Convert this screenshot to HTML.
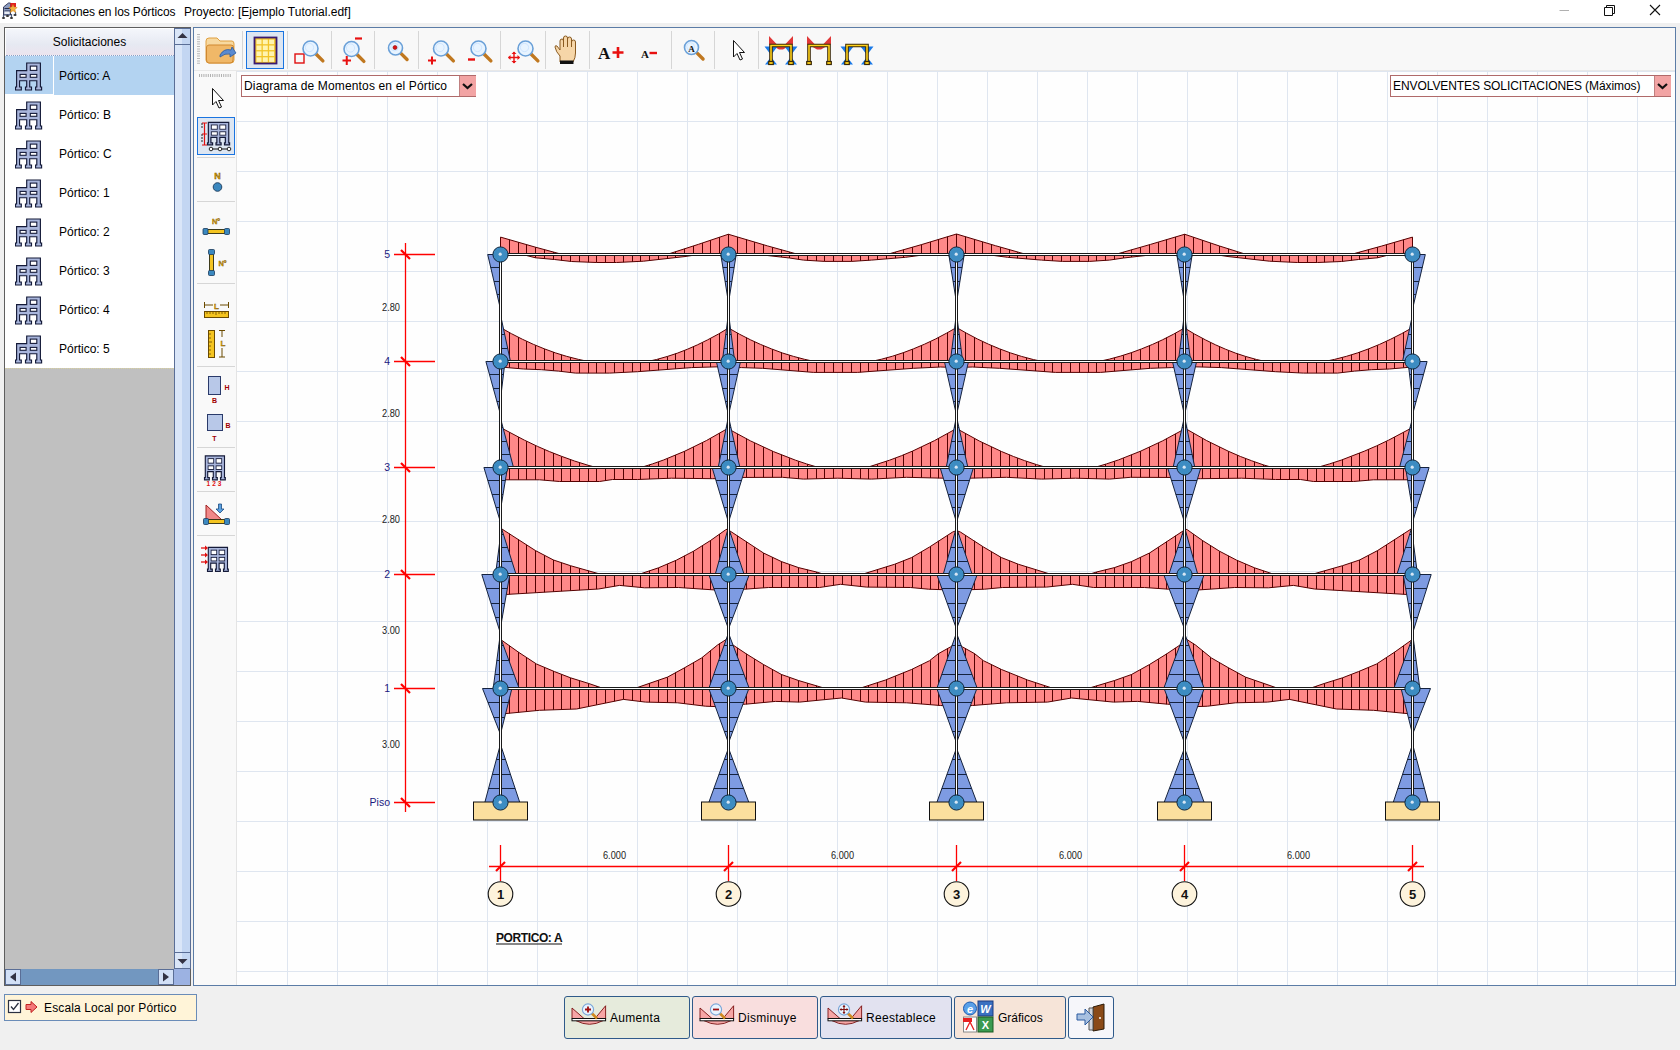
<!DOCTYPE html><html><head><meta charset="utf-8"><style>html,body{margin:0;padding:0;}body{width:1680px;height:1050px;overflow:hidden;position:relative;background:#f0f0f0;font-family:"Liberation Sans", sans-serif;font-size:12px;color:#000;}.a{position:absolute;}svg text{font-family:"Liberation Sans", sans-serif;}</style></head><body>
<div class="a" style="left:0;top:0;width:1680px;height:23px;background:#fff"></div>
<svg class="a" style="left:0;top:0" width="20" height="22"><path d="M3.5 7L8.5 3H10.5V15H3.5Z" fill="#8c9cc0" stroke="#2a3050" stroke-width="0.9"/><path d="M4.5 8.5H10M4.5 11H10" stroke="#1a2040" stroke-width="0.9"/><rect x="4.5" y="11.5" width="5" height="2.5" fill="#e8ecf4"/><path d="M3.5 15V18M7.5 14V16M11.5 14V18M15.5 12V15" stroke="#4a5a80" stroke-width="1.2"/><ellipse cx="3.5" cy="18" rx="1.6" ry="1" fill="#333"/><ellipse cx="7.5" cy="16" rx="1.6" ry="1" fill="#333"/><ellipse cx="11.5" cy="18" rx="1.6" ry="1" fill="#333"/><ellipse cx="15" cy="15" rx="1.6" ry="1" fill="#333"/><rect x="10.3" y="3" width="5.7" height="4" fill="#e02020"/><path d="M13 4.5L14.2 7.3L17.2 7.5L14.9 9.5L15.7 12.4L13 10.8L10.3 12.4L11.1 9.5L8.8 7.5L11.8 7.3Z" fill="#f4b040" stroke="#d08010" stroke-width="0.5"/></svg>
<div class="a" style="left:23px;top:5px;font-size:12px;white-space:pre;color:#000;letter-spacing:-0.1px">Solicitaciones en los Pórticos</div>
<div class="a" style="left:184px;top:5px;font-size:12px;white-space:pre;color:#000">Proyecto: [Ejemplo Tutorial.edf]</div>
<svg class="a" style="left:1550px;top:0" width="130" height="23"><path d="M9.5 10.5H19" stroke="#b0b0b0" stroke-width="1"/><path d="M54.5 7.5H62.5V15.5H54.5Z M56.5 7.5V5.5H64.5V13.5H62.5" fill="none" stroke="#111" stroke-width="1"/><path d="M100 5L110 15M110 5L100 15" stroke="#111" stroke-width="1.1"/></svg>
<div class="a" style="left:4px;top:27px;width:185px;height:957px;border:1px solid #5e5e5e;background:#c0c0c0"></div>
<div class="a" style="left:5px;top:28px;width:169px;height:340px;background:#fff"></div>
<div class="a" style="left:6px;top:29px;width:168px;height:26px;background:linear-gradient(#f4f6fb,#e6e9f2 60%,#ebe4ee);border-bottom:1px dotted #8aa0c8"></div>
<div class="a" style="left:5px;top:35px;width:169px;text-align:center;font-size:12px">Solicitaciones</div>
<div class="a" style="left:5px;top:56px;width:48px;height:38px;background:#b3d3f1"></div>
<div class="a" style="left:54px;top:56px;width:120px;height:39px;background:#b3d3f1"></div>
<svg style="position:absolute;left:15px;top:62px" width="28" height="29" viewBox="-0.5 -0.5 28 29"><path d="M1.1 8.1H11.2V0.5H24.9V24.5H26.1V27.5H20.1V24.5H21.3V18.2H14.2V24.5H16V27.5H10V24.5H11.2V18.2H4.05V24.5H5.8V27.5H0V24.5H1.1Z" fill="#a9b6dc" stroke="#141a38" stroke-width="1.15"/><rect x="14.8" y="3.6" width="6.5" height="4.3" fill="#fff" stroke="#141a38" stroke-width="1.1"/><rect x="4.6" y="11.9" width="6" height="2.9" fill="#fff" stroke="#141a38" stroke-width="1.1"/><rect x="14.8" y="11.9" width="6.5" height="2.9" fill="#fff" stroke="#141a38" stroke-width="1.1"/></svg>
<div class="a" style="left:59px;top:69px;font-size:12px;color:#000">Pórtico: A</div>
<svg style="position:absolute;left:15px;top:101px" width="28" height="29" viewBox="-0.5 -0.5 28 29"><path d="M1.1 8.1H11.2V0.5H24.9V24.5H26.1V27.5H20.1V24.5H21.3V18.2H14.2V24.5H16V27.5H10V24.5H11.2V18.2H4.05V24.5H5.8V27.5H0V24.5H1.1Z" fill="#a9b6dc" stroke="#141a38" stroke-width="1.15"/><rect x="14.8" y="3.6" width="6.5" height="4.3" fill="#fff" stroke="#141a38" stroke-width="1.1"/><rect x="4.6" y="11.9" width="6" height="2.9" fill="#fff" stroke="#141a38" stroke-width="1.1"/><rect x="14.8" y="11.9" width="6.5" height="2.9" fill="#fff" stroke="#141a38" stroke-width="1.1"/></svg>
<div class="a" style="left:59px;top:108px;font-size:12px;color:#000">Pórtico: B</div>
<svg style="position:absolute;left:15px;top:140px" width="28" height="29" viewBox="-0.5 -0.5 28 29"><path d="M1.1 8.1H11.2V0.5H24.9V24.5H26.1V27.5H20.1V24.5H21.3V18.2H14.2V24.5H16V27.5H10V24.5H11.2V18.2H4.05V24.5H5.8V27.5H0V24.5H1.1Z" fill="#a9b6dc" stroke="#141a38" stroke-width="1.15"/><rect x="14.8" y="3.6" width="6.5" height="4.3" fill="#fff" stroke="#141a38" stroke-width="1.1"/><rect x="4.6" y="11.9" width="6" height="2.9" fill="#fff" stroke="#141a38" stroke-width="1.1"/><rect x="14.8" y="11.9" width="6.5" height="2.9" fill="#fff" stroke="#141a38" stroke-width="1.1"/></svg>
<div class="a" style="left:59px;top:147px;font-size:12px;color:#000">Pórtico: C</div>
<svg style="position:absolute;left:15px;top:179px" width="28" height="29" viewBox="-0.5 -0.5 28 29"><path d="M1.1 8.1H11.2V0.5H24.9V24.5H26.1V27.5H20.1V24.5H21.3V18.2H14.2V24.5H16V27.5H10V24.5H11.2V18.2H4.05V24.5H5.8V27.5H0V24.5H1.1Z" fill="#a9b6dc" stroke="#141a38" stroke-width="1.15"/><rect x="14.8" y="3.6" width="6.5" height="4.3" fill="#fff" stroke="#141a38" stroke-width="1.1"/><rect x="4.6" y="11.9" width="6" height="2.9" fill="#fff" stroke="#141a38" stroke-width="1.1"/><rect x="14.8" y="11.9" width="6.5" height="2.9" fill="#fff" stroke="#141a38" stroke-width="1.1"/></svg>
<div class="a" style="left:59px;top:186px;font-size:12px;color:#000">Pórtico: 1</div>
<svg style="position:absolute;left:15px;top:218px" width="28" height="29" viewBox="-0.5 -0.5 28 29"><path d="M1.1 8.1H11.2V0.5H24.9V24.5H26.1V27.5H20.1V24.5H21.3V18.2H14.2V24.5H16V27.5H10V24.5H11.2V18.2H4.05V24.5H5.8V27.5H0V24.5H1.1Z" fill="#a9b6dc" stroke="#141a38" stroke-width="1.15"/><rect x="14.8" y="3.6" width="6.5" height="4.3" fill="#fff" stroke="#141a38" stroke-width="1.1"/><rect x="4.6" y="11.9" width="6" height="2.9" fill="#fff" stroke="#141a38" stroke-width="1.1"/><rect x="14.8" y="11.9" width="6.5" height="2.9" fill="#fff" stroke="#141a38" stroke-width="1.1"/></svg>
<div class="a" style="left:59px;top:225px;font-size:12px;color:#000">Pórtico: 2</div>
<svg style="position:absolute;left:15px;top:257px" width="28" height="29" viewBox="-0.5 -0.5 28 29"><path d="M1.1 8.1H11.2V0.5H24.9V24.5H26.1V27.5H20.1V24.5H21.3V18.2H14.2V24.5H16V27.5H10V24.5H11.2V18.2H4.05V24.5H5.8V27.5H0V24.5H1.1Z" fill="#a9b6dc" stroke="#141a38" stroke-width="1.15"/><rect x="14.8" y="3.6" width="6.5" height="4.3" fill="#fff" stroke="#141a38" stroke-width="1.1"/><rect x="4.6" y="11.9" width="6" height="2.9" fill="#fff" stroke="#141a38" stroke-width="1.1"/><rect x="14.8" y="11.9" width="6.5" height="2.9" fill="#fff" stroke="#141a38" stroke-width="1.1"/></svg>
<div class="a" style="left:59px;top:264px;font-size:12px;color:#000">Pórtico: 3</div>
<svg style="position:absolute;left:15px;top:296px" width="28" height="29" viewBox="-0.5 -0.5 28 29"><path d="M1.1 8.1H11.2V0.5H24.9V24.5H26.1V27.5H20.1V24.5H21.3V18.2H14.2V24.5H16V27.5H10V24.5H11.2V18.2H4.05V24.5H5.8V27.5H0V24.5H1.1Z" fill="#a9b6dc" stroke="#141a38" stroke-width="1.15"/><rect x="14.8" y="3.6" width="6.5" height="4.3" fill="#fff" stroke="#141a38" stroke-width="1.1"/><rect x="4.6" y="11.9" width="6" height="2.9" fill="#fff" stroke="#141a38" stroke-width="1.1"/><rect x="14.8" y="11.9" width="6.5" height="2.9" fill="#fff" stroke="#141a38" stroke-width="1.1"/></svg>
<div class="a" style="left:59px;top:303px;font-size:12px;color:#000">Pórtico: 4</div>
<svg style="position:absolute;left:15px;top:335px" width="28" height="29" viewBox="-0.5 -0.5 28 29"><path d="M1.1 8.1H11.2V0.5H24.9V24.5H26.1V27.5H20.1V24.5H21.3V18.2H14.2V24.5H16V27.5H10V24.5H11.2V18.2H4.05V24.5H5.8V27.5H0V24.5H1.1Z" fill="#a9b6dc" stroke="#141a38" stroke-width="1.15"/><rect x="14.8" y="3.6" width="6.5" height="4.3" fill="#fff" stroke="#141a38" stroke-width="1.1"/><rect x="4.6" y="11.9" width="6" height="2.9" fill="#fff" stroke="#141a38" stroke-width="1.1"/><rect x="14.8" y="11.9" width="6.5" height="2.9" fill="#fff" stroke="#141a38" stroke-width="1.1"/></svg>
<div class="a" style="left:59px;top:342px;font-size:12px;color:#000">Pórtico: 5</div>
<div class="a" style="left:5px;top:368px;width:169px;height:1px;border-top:1px dotted #d8d0a0"></div>
<div class="a" style="left:174px;top:28px;width:15px;height:941px;background:linear-gradient(90deg,#dae6f8 50%,#c3d6f2 50%);border-left:1px solid #5a6e96;border-right:1px solid #5a6e96"></div>
<div class="a" style="left:174px;top:28px;width:15px;height:15px;border:1px solid #5a6e96;background:linear-gradient(90deg,#dae6f8 50%,#c3d6f2 50%)"></div>
<svg class="a" style="left:175px;top:30px" width="15" height="12"><path d="M2.5 8H12.5L7.5 3Z" fill="#334"/></svg>
<div class="a" style="left:174px;top:952px;width:15px;height:15px;border:1px solid #5a6e96;background:linear-gradient(90deg,#dae6f8 50%,#c3d6f2 50%)"></div>
<svg class="a" style="left:175px;top:955px" width="15" height="12"><path d="M2.5 4H12.5L7.5 9Z" fill="#334"/></svg>
<div class="a" style="left:5px;top:969px;width:169px;height:16px;background:#7297c0"></div>
<div class="a" style="left:5px;top:969px;width:14px;height:14px;border:1px solid #5a6e96;background:#d2e0f6"></div>
<svg class="a" style="left:6px;top:970px" width="14" height="14"><path d="M4 7L10 2.5V11.5Z" fill="#334"/></svg>
<div class="a" style="left:158px;top:969px;width:14px;height:14px;border:1px solid #5a6e96;background:#d2e0f6"></div>
<svg class="a" style="left:159px;top:970px" width="14" height="14"><path d="M10 7L4 2.5V11.5Z" fill="#334"/></svg>
<div class="a" style="left:174px;top:969px;width:16px;height:16px;background:#9cb2e2"></div>
<div class="a" style="left:193px;top:27px;width:1481px;height:957px;border:1px solid #5b7ca6;background:#fcfcfc"></div>
<div class="a" style="left:194px;top:28px;width:1481px;height:42px;background:#f8f8f8;border-bottom:1px solid #e8e8e8"></div>
<div class="a" style="left:194px;top:71px;width:42px;height:914px;background:#f9f9f9;border-right:1px solid #e4e4e4"></div>
<div class="a" style="left:237px;top:71px;width:1438px;height:914px;background:#fefefe"></div>
<div style="position:absolute;left:242px;top:31px;width:1px;height:38px;background:#d6d6d6"></div>
<div style="position:absolute;left:287px;top:31px;width:1px;height:38px;background:#d6d6d6"></div>
<div style="position:absolute;left:331px;top:31px;width:1px;height:38px;background:#d6d6d6"></div>
<div style="position:absolute;left:374px;top:31px;width:1px;height:38px;background:#d6d6d6"></div>
<div style="position:absolute;left:418px;top:31px;width:1px;height:38px;background:#d6d6d6"></div>
<div style="position:absolute;left:500px;top:31px;width:1px;height:38px;background:#d6d6d6"></div>
<div style="position:absolute;left:545px;top:31px;width:1px;height:38px;background:#d6d6d6"></div>
<div style="position:absolute;left:589px;top:31px;width:1px;height:38px;background:#d6d6d6"></div>
<div style="position:absolute;left:671px;top:31px;width:1px;height:38px;background:#d6d6d6"></div>
<div style="position:absolute;left:714px;top:31px;width:1px;height:38px;background:#d6d6d6"></div>
<div style="position:absolute;left:758px;top:31px;width:1px;height:38px;background:#d6d6d6"></div>
<div style="position:absolute;left:197px;top:157px;width:38px;height:1px;background:#d6d6d6"></div>
<div style="position:absolute;left:197px;top:201px;width:38px;height:1px;background:#d6d6d6"></div>
<div style="position:absolute;left:197px;top:283px;width:38px;height:1px;background:#d6d6d6"></div>
<div style="position:absolute;left:197px;top:366px;width:38px;height:1px;background:#d6d6d6"></div>
<div style="position:absolute;left:197px;top:447px;width:38px;height:1px;background:#d6d6d6"></div>
<div style="position:absolute;left:197px;top:491px;width:38px;height:1px;background:#d6d6d6"></div>
<div style="position:absolute;left:197px;top:535px;width:38px;height:1px;background:#d6d6d6"></div>
<svg style="position:absolute;left:0;top:0" width="1680" height="75"><path d="M198.5 34V65" stroke="#b8b8b8" stroke-width="3" stroke-dasharray="1 1.4"/><path d="M206 41Q206 38 209 38H217L220 41H232Q234 41 234 44V60Q234 63 231 63H209Q206 63 206 60Z" fill="#f7d9a0" stroke="#e0a040" stroke-width="1"/><path d="M206.5 47Q207 45 209 45H231Q234 45 233.5 48L233 60Q233 63 230 63H209Q206.5 63 206.5 60Z" fill="#f0b868" stroke="#d08830" stroke-width="1"/><path d="M220 55Q224 48 231 50L232 47L236 53L230 57L230 54Q225 53 220 57Z" fill="#5a8ad0" stroke="#2a5aa0" stroke-width="0.8"/><rect x="246.5" y="31.5" width="37" height="37" fill="#dde6f2" stroke="#1a74e0" stroke-width="1"/><rect x="254.5" y="37.5" width="22" height="26" fill="#f2c428" stroke="#3a1a70" stroke-width="1.8"/><rect x="256.5" y="39.6" width="5" height="4.6" fill="#fff4b0"/><rect x="256.5" y="45.5" width="5" height="4.6" fill="#fff4b0"/><rect x="256.5" y="51.400000000000006" width="5" height="4.6" fill="#fff4b0"/><rect x="256.5" y="57.300000000000004" width="5" height="4.6" fill="#fff4b0"/><rect x="262.8" y="39.6" width="5" height="4.6" fill="#fff4b0"/><rect x="262.8" y="45.5" width="5" height="4.6" fill="#fff4b0"/><rect x="262.8" y="51.400000000000006" width="5" height="4.6" fill="#fff4b0"/><rect x="262.8" y="57.300000000000004" width="5" height="4.6" fill="#fff4b0"/><rect x="269.1" y="39.6" width="5" height="4.6" fill="#fff4b0"/><rect x="269.1" y="45.5" width="5" height="4.6" fill="#fff4b0"/><rect x="269.1" y="51.400000000000006" width="5" height="4.6" fill="#fff4b0"/><rect x="269.1" y="57.300000000000004" width="5" height="4.6" fill="#fff4b0"/><rect x="295" y="54" width="9" height="9" fill="none" stroke="#e01010" stroke-width="1.4"/><line x1="315.75" y1="53.75" x2="322.875" y2="60.875" stroke="#c07820" stroke-width="3.4" stroke-linecap="round"/><circle cx="310.5" cy="48.5" r="7.5" fill="#e8f4ff" stroke="#6aa0d8" stroke-width="1.6"/><circle cx="309.5" cy="47.5" r="4.125" fill="none" stroke="#cfe6ff" stroke-width="1"/><line x1="356.75" y1="54.25" x2="363.875" y2="61.375" stroke="#c07820" stroke-width="3.4" stroke-linecap="round"/><circle cx="351.5" cy="49" r="7.5" fill="#e8f4ff" stroke="#6aa0d8" stroke-width="1.6"/><circle cx="350.5" cy="48" r="4.125" fill="none" stroke="#cfe6ff" stroke-width="1"/><path d="M355 38.5H362" stroke="#e81010" stroke-width="2.2"/><path d="M342.5 60.5H351M346.75 56V65" stroke="#e81010" stroke-width="2"/><line x1="400.4" y1="52.9" x2="407.05" y2="59.55" stroke="#c07820" stroke-width="3.4" stroke-linecap="round"/><circle cx="395.5" cy="48" r="7" fill="#e8f4ff" stroke="#6aa0d8" stroke-width="1.6"/><circle cx="394.5" cy="47" r="3.8500000000000005" fill="none" stroke="#cfe6ff" stroke-width="1"/><circle cx="395" cy="47.5" r="2" fill="#e01010" stroke="#801010" stroke-width="0.6"/><line x1="446.25" y1="53.75" x2="453.375" y2="60.875" stroke="#c07820" stroke-width="3.4" stroke-linecap="round"/><circle cx="441" cy="48.5" r="7.5" fill="#e8f4ff" stroke="#6aa0d8" stroke-width="1.6"/><circle cx="440" cy="47.5" r="4.125" fill="none" stroke="#cfe6ff" stroke-width="1"/><path d="M428 60.5H436M432 56.5V64.5" stroke="#e81010" stroke-width="2"/><line x1="483.75" y1="53.75" x2="490.875" y2="60.875" stroke="#c07820" stroke-width="3.4" stroke-linecap="round"/><circle cx="478.5" cy="48.5" r="7.5" fill="#e8f4ff" stroke="#6aa0d8" stroke-width="1.6"/><circle cx="477.5" cy="47.5" r="4.125" fill="none" stroke="#cfe6ff" stroke-width="1"/><path d="M468 59.5H475" stroke="#e81010" stroke-width="2.4"/><line x1="530.75" y1="53.75" x2="537.875" y2="60.875" stroke="#c07820" stroke-width="3.4" stroke-linecap="round"/><circle cx="525.5" cy="48.5" r="7.5" fill="#e8f4ff" stroke="#6aa0d8" stroke-width="1.6"/><circle cx="524.5" cy="47.5" r="4.125" fill="none" stroke="#cfe6ff" stroke-width="1"/><path d="M508.5 57.5H519.5M514 52V63" stroke="#e81010" stroke-width="1.4"/><path d="M508 57.5L510.5 55V60Z M520 57.5L517.5 55V60Z M514 51.5L511.5 54H516.5Z M514 63.5L511.5 61H516.5Z" fill="#e81010"/><path d="M560 62V56Q556 52 555 47Q555 45 557 46L560 50V41Q560 39 562 39Q563.5 39 563.5 41V47V38Q563.5 36 565.5 36Q567.5 36 567.5 38V47V39Q567.5 37 569.5 37Q571.5 37 571.5 39V47V42Q571.5 40 573.5 40Q575.5 40 575.5 42V53Q575.5 58 573 62Z" fill="#f6d6a8" stroke="#8a5a20" stroke-width="1"/><rect x="560" y="60.5" width="13.5" height="3.5" fill="#111"/><text x="598" y="58.5" style="font-family:Liberation Serif,serif" font-size="17" font-weight="bold" fill="#111">A</text><path d="M612.5 52.5H623.5M618 47V58" stroke="#e81010" stroke-width="2.6"/><text x="641" y="58" style="font-family:Liberation Serif,serif" font-size="11" font-weight="bold" fill="#111">A</text><path d="M649.5 53H657" stroke="#e81010" stroke-width="2.4"/><line x1="696.4" y1="52.4" x2="703.05" y2="59.05" stroke="#c07820" stroke-width="3.4" stroke-linecap="round"/><circle cx="691.5" cy="47.5" r="7" fill="#e8f4ff" stroke="#6aa0d8" stroke-width="1.6"/><circle cx="690.5" cy="46.5" r="3.8500000000000005" fill="none" stroke="#cfe6ff" stroke-width="1"/><text x="691.5" y="51.5" text-anchor="middle" style="font-family:Liberation Serif,serif" font-size="9" font-weight="bold" fill="#111">A</text><path d="M733.5 40.5V57L737 53.5L740 60L742.5 59L739.5 52.5H744.5Z" fill="#fff" stroke="#111" stroke-width="1"/><path d="M769 36V44.5H777Z M793 36V44.5H785Z M773 46H789L783 49.5H779Z" fill="#e03838"/><path d="M764.5 46.5H777.5L771 55Z M771 57L765 64.5H777Z" fill="#1a7ae8"/><path d="M784.5 46.5H797.5L791 55Z M791 57L785 64.5H797Z" fill="#1a7ae8"/><path d="M771 63V45.5H791V63" fill="none" stroke="#3a2808" stroke-width="3.6"/><path d="M771 63V45.5H791V63" fill="none" stroke="#ffd21a" stroke-width="1.6"/><rect x="768.7" y="61.5" width="4.6" height="3" fill="#ffd21a" stroke="#3a2808" stroke-width="1.2"/><rect x="788.7" y="61.5" width="4.6" height="3" fill="#ffd21a" stroke="#3a2808" stroke-width="1.2"/><path d="M807 36V44.5H815Z M831 36V44.5H823Z M811 46H827L821 49.5H817Z" fill="#e03838"/><path d="M809 63V45.5H829V63" fill="none" stroke="#3a2808" stroke-width="3.6"/><path d="M809 63V45.5H829V63" fill="none" stroke="#ffd21a" stroke-width="1.6"/><rect x="806.7" y="61.5" width="4.6" height="3" fill="#ffd21a" stroke="#3a2808" stroke-width="1.2"/><rect x="826.7" y="61.5" width="4.6" height="3" fill="#ffd21a" stroke="#3a2808" stroke-width="1.2"/><path d="M840.5 46.5H853.5L847 55Z M847 57L841 64.5H853Z" fill="#1a7ae8"/><path d="M860.5 46.5H873.5L867 55Z M867 57L861 64.5H873Z" fill="#1a7ae8"/><path d="M847 63V45.5H867V63" fill="none" stroke="#3a2808" stroke-width="3.6"/><path d="M847 63V45.5H867V63" fill="none" stroke="#ffd21a" stroke-width="1.6"/><rect x="844.7" y="61.5" width="4.6" height="3" fill="#ffd21a" stroke="#3a2808" stroke-width="1.2"/><rect x="864.7" y="61.5" width="4.6" height="3" fill="#ffd21a" stroke="#3a2808" stroke-width="1.2"/></svg>
<svg style="position:absolute;left:0;top:0" width="240" height="600"><path d="M199 75.5H232" stroke="#b0b0b0" stroke-width="3" stroke-dasharray="1 1.2"/><path d="M212.5 88.5V105L216 101.5L219 108L221.5 107L218.5 100.5H223.5Z" fill="#fff" stroke="#111" stroke-width="1"/><rect x="197.5" y="117.5" width="37" height="37" fill="#dde6f2" stroke="#1a74e0" stroke-width="1"/><g transform="translate(207.5 122) scale(0.85)"><path d="M1 0.5H25V24.5H26V27H20V24.5H21V18H14.5V24.5H16V27H10V24.5H11V18H4V24.5H6V27H0V24.5H1Z" fill="#a9b6dc" stroke="#141a38" stroke-width="1.4"/><rect x="4.5" y="3.5" width="7" height="5" fill="#fff" stroke="#141a38"/><rect x="14.5" y="3.5" width="7" height="5" fill="#fff" stroke="#141a38"/><rect x="4.5" y="11.5" width="7" height="4" fill="#fff" stroke="#141a38"/><rect x="14.5" y="11.5" width="7" height="4" fill="#fff" stroke="#141a38"/></g><path d="M204.5 123V145M202 123H207M202 134H207M202 145H207" stroke="#e01010" stroke-width="1.2"/><path d="M201 124H203M201 127H203M201 135H203M201 138H203M201 141H203" stroke="#222" stroke-width="1"/><path d="M211 149H229" stroke="#111" stroke-width="1"/><circle cx="211" cy="149" r="1.8" fill="#fff" stroke="#111" stroke-width="0.9"/><circle cx="220" cy="149" r="1.8" fill="#fff" stroke="#111" stroke-width="0.9"/><circle cx="229" cy="149" r="1.8" fill="#fff" stroke="#111" stroke-width="0.9"/><text x="217.5" y="179" text-anchor="middle" font-size="9" font-weight="bold" fill="#e8a800" stroke="#6a4a00" stroke-width="0.4">N</text><circle cx="217.5" cy="187" r="4.3" fill="#3b88bf" stroke="#1b3a5a" stroke-width="0.9"/><text x="216" y="224" text-anchor="middle" font-size="7.5" font-weight="bold" fill="#e8a800" stroke="#6a4a00" stroke-width="0.3">Nº</text><rect x="204" y="229.5" width="24" height="4" fill="#f4c420" stroke="#2a2a10" stroke-width="0.9"/><rect x="203" y="228.5" width="5" height="6" rx="1" fill="#3b88bf" stroke="#1b3a5a" stroke-width="0.8"/><rect x="224.5" y="228.5" width="5" height="6" rx="1" fill="#3b88bf" stroke="#1b3a5a" stroke-width="0.8"/><rect x="209.5" y="252" width="4" height="21" fill="#f4c420" stroke="#2a2a10" stroke-width="0.9"/><rect x="208.5" y="249.5" width="6" height="5" rx="1" fill="#3b88bf" stroke="#1b3a5a" stroke-width="0.8"/><rect x="208.5" y="270.5" width="6" height="5" rx="1" fill="#3b88bf" stroke="#1b3a5a" stroke-width="0.8"/><text x="222.5" y="266" text-anchor="middle" font-size="7.5" font-weight="bold" fill="#e8a800" stroke="#6a4a00" stroke-width="0.3">Nº</text><path d="M204.5 302V308M228.5 302V308M204.5 305H213M220 305H228.5" stroke="#6a4a00" stroke-width="1"/><text x="216.5" y="309" text-anchor="middle" font-size="8" font-weight="bold" fill="#e8a800" stroke="#6a4a00" stroke-width="0.3">L</text><rect x="204.5" y="311.5" width="24" height="6" fill="#f4c420" stroke="#6a4a00" stroke-width="1"/><path d="M207 311.5V314M210 311.5V314M213 311.5V314M216 311.5V315M219 311.5V314M222 311.5V314M225 311.5V314" stroke="#6a4a00" stroke-width="0.8"/><rect x="208.5" y="330.5" width="6" height="27" fill="#f4c420" stroke="#6a4a00" stroke-width="1"/><path d="M208.5 334H211M208.5 338H211M208.5 342H212M208.5 346H211M208.5 350H211M208.5 354H211" stroke="#6a4a00" stroke-width="0.8"/><path d="M219 330.5H225M222 330.5V337M222 348V357M219 357H225" stroke="#6a4a00" stroke-width="1"/><text x="223" y="346" text-anchor="middle" font-size="8" font-weight="bold" fill="#e8a800" stroke="#6a4a00" stroke-width="0.3">L</text><rect x="208.5" y="376.5" width="12" height="18" fill="#b8c8e8" stroke="#2a3a6a" stroke-width="1"/><text x="227" y="390" text-anchor="middle" font-size="7" font-weight="bold" fill="#a00000">H</text><text x="214.5" y="403" text-anchor="middle" font-size="7" font-weight="bold" fill="#a00000">B</text><rect x="207.5" y="414.5" width="15" height="16" fill="#b8c8e8" stroke="#2a3a6a" stroke-width="1"/><text x="228" y="428" text-anchor="middle" font-size="7" font-weight="bold" fill="#a00000">B</text><text x="214.5" y="441" text-anchor="middle" font-size="7" font-weight="bold" fill="#a00000">T</text><g transform="translate(204.5 455.5) scale(0.8 0.9)"><path d="M1 0.5H25V24.5H26V27H20V24.5H21V18H14.5V24.5H16V27H10V24.5H11V18H4V24.5H6V27H0V24.5H1Z" fill="#a9b6dc" stroke="#141a38" stroke-width="1.4"/><rect x="4.5" y="3.5" width="7" height="5" fill="#fff" stroke="#141a38"/><rect x="14.5" y="3.5" width="7" height="5" fill="#fff" stroke="#141a38"/><rect x="4.5" y="11.5" width="7" height="4" fill="#fff" stroke="#141a38"/><rect x="14.5" y="11.5" width="7" height="4" fill="#fff" stroke="#141a38"/></g><text x="215" y="486" text-anchor="middle" font-size="6.5" font-weight="bold" fill="#e01010" letter-spacing="2">123</text><path d="M206 505V520H222Z" fill="#f08888" stroke="#a02020" stroke-width="1"/><path d="M218.5 504V509H216L220 513L224 509H221.5V504Z" fill="#5aa0e0" stroke="#1a4a80" stroke-width="0.8"/><rect x="206" y="519.5" width="20" height="4" fill="#f4c420" stroke="#2a2a10" stroke-width="0.9"/><rect x="203.5" y="518.5" width="5" height="6" rx="1" fill="#3b88bf" stroke="#1b3a5a" stroke-width="0.8"/><rect x="224.5" y="518.5" width="5" height="6" rx="1" fill="#3b88bf" stroke="#1b3a5a" stroke-width="0.8"/><g transform="translate(207.5 547) scale(0.8 0.9)"><path d="M1 0.5H25V24.5H26V27H20V24.5H21V18H14.5V24.5H16V27H10V24.5H11V18H4V24.5H6V27H0V24.5H1Z" fill="#a9b6dc" stroke="#141a38" stroke-width="1.4"/><rect x="4.5" y="3.5" width="7" height="5" fill="#fff" stroke="#141a38"/><rect x="14.5" y="3.5" width="7" height="5" fill="#fff" stroke="#141a38"/><rect x="4.5" y="11.5" width="7" height="4" fill="#fff" stroke="#141a38"/><rect x="14.5" y="11.5" width="7" height="4" fill="#fff" stroke="#141a38"/></g><path d="M201 548H206" stroke="#e01010" stroke-width="1.3"/><path d="M208 548L205 545.5V550.5Z" fill="#e01010"/><path d="M201 555H206" stroke="#e01010" stroke-width="1.3"/><path d="M208 555L205 552.5V557.5Z" fill="#e01010"/><path d="M201 562H206" stroke="#e01010" stroke-width="1.3"/><path d="M208 562L205 559.5V564.5Z" fill="#e01010"/></svg>
<svg class="a" style="left:0;top:0" width="1680" height="1050">
<defs><clipPath id="cv"><rect x="237" y="71" width="1438" height="914"/></clipPath></defs><g clip-path="url(#cv)">
<path d="M287.5 71V985M337.5 71V985M387.5 71V985M437.5 71V985M487.5 71V985M537.5 71V985M587.5 71V985M637.5 71V985M687.5 71V985M737.5 71V985M787.5 71V985M837.5 71V985M887.5 71V985M937.5 71V985M987.5 71V985M1037.5 71V985M1087.5 71V985M1137.5 71V985M1187.5 71V985M1237.5 71V985M1287.5 71V985M1337.5 71V985M1387.5 71V985M1437.5 71V985M1487.5 71V985M1537.5 71V985M1587.5 71V985M1637.5 71V985M237 71.5H1675M237 121.5H1675M237 171.5H1675M237 221.5H1675M237 271.5H1675M237 321.5H1675M237 371.5H1675M237 421.5H1675M237 471.5H1675M237 521.5H1675M237 571.5H1675M237 621.5H1675M237 671.5H1675M237 721.5H1675M237 771.5H1675M237 821.5H1675M237 871.5H1675M237 921.5H1675M237 971.5H1675" stroke="#dfe6f0" stroke-width="1" fill="none"/>
<path d="M405.5 243V812" stroke="#ff0000" stroke-width="1.3"/>
<path d="M394 254.5H435" stroke="#ff0000" stroke-width="1.3"/>
<path d="M401 250.0L410 259.0" stroke="#ff0000" stroke-width="2.2"/>
<text x="390" y="257.8" text-anchor="end" font-size="10.5" fill="#1a1a80">5</text>
<path d="M394 361.5H435" stroke="#ff0000" stroke-width="1.3"/>
<path d="M401 357.0L410 366.0" stroke="#ff0000" stroke-width="2.2"/>
<text x="390" y="364.8" text-anchor="end" font-size="10.5" fill="#1a1a80">4</text>
<path d="M394 467.5H435" stroke="#ff0000" stroke-width="1.3"/>
<path d="M401 463.0L410 472.0" stroke="#ff0000" stroke-width="2.2"/>
<text x="390" y="470.8" text-anchor="end" font-size="10.5" fill="#1a1a80">3</text>
<path d="M394 574.5H435" stroke="#ff0000" stroke-width="1.3"/>
<path d="M401 570.0L410 579.0" stroke="#ff0000" stroke-width="2.2"/>
<text x="390" y="577.8" text-anchor="end" font-size="10.5" fill="#1a1a80">2</text>
<path d="M394 688.5H435" stroke="#ff0000" stroke-width="1.3"/>
<path d="M401 684.0L410 693.0" stroke="#ff0000" stroke-width="2.2"/>
<text x="390" y="691.8" text-anchor="end" font-size="10.5" fill="#1a1a80">1</text>
<path d="M394 802.5H435" stroke="#ff0000" stroke-width="1.3"/>
<path d="M401 798.0L410 807.0" stroke="#ff0000" stroke-width="2.2"/>
<text x="390" y="805.8" text-anchor="end" font-size="10.5" fill="#1a1a80">Piso</text>
<text x="382" y="311.4" font-size="10" fill="#222" textLength="18" lengthAdjust="spacingAndGlyphs">2.80</text>
<text x="382" y="417.4" font-size="10" fill="#222" textLength="18" lengthAdjust="spacingAndGlyphs">2.80</text>
<text x="382" y="523.4" font-size="10" fill="#222" textLength="18" lengthAdjust="spacingAndGlyphs">2.80</text>
<text x="382" y="634.4" font-size="10" fill="#222" textLength="18" lengthAdjust="spacingAndGlyphs">3.00</text>
<text x="382" y="748.4" font-size="10" fill="#222" textLength="18" lengthAdjust="spacingAndGlyphs">3.00</text>
<path d="M489 866.5H1424" stroke="#ff0000" stroke-width="1.3"/>
<path d="M500.5 845V881" stroke="#ff0000" stroke-width="1.3"/>
<path d="M496.0 871L505.0 862" stroke="#ff0000" stroke-width="2.2"/>
<path d="M728.5 845V881" stroke="#ff0000" stroke-width="1.3"/>
<path d="M724.0 871L733.0 862" stroke="#ff0000" stroke-width="2.2"/>
<path d="M956.5 845V881" stroke="#ff0000" stroke-width="1.3"/>
<path d="M952.0 871L961.0 862" stroke="#ff0000" stroke-width="2.2"/>
<path d="M1184.5 845V881" stroke="#ff0000" stroke-width="1.3"/>
<path d="M1180.0 871L1189.0 862" stroke="#ff0000" stroke-width="2.2"/>
<path d="M1412.5 845V881" stroke="#ff0000" stroke-width="1.3"/>
<path d="M1408.0 871L1417.0 862" stroke="#ff0000" stroke-width="2.2"/>
<text x="603.0" y="859" font-size="10" fill="#222" textLength="23" lengthAdjust="spacingAndGlyphs">6.000</text>
<text x="831.0" y="859" font-size="10" fill="#222" textLength="23" lengthAdjust="spacingAndGlyphs">6.000</text>
<text x="1059.0" y="859" font-size="10" fill="#222" textLength="23" lengthAdjust="spacingAndGlyphs">6.000</text>
<text x="1287.0" y="859" font-size="10" fill="#222" textLength="23" lengthAdjust="spacingAndGlyphs">6.000</text>
<circle cx="500.5" cy="894" r="12.3" fill="#fdf3dc" stroke="#111" stroke-width="1.1"/>
<text x="500.5" y="899" text-anchor="middle" font-size="13" font-weight="bold" fill="#111">1</text>
<circle cx="728.5" cy="894" r="12.3" fill="#fdf3dc" stroke="#111" stroke-width="1.1"/>
<text x="728.5" y="899" text-anchor="middle" font-size="13" font-weight="bold" fill="#111">2</text>
<circle cx="956.5" cy="894" r="12.3" fill="#fdf3dc" stroke="#111" stroke-width="1.1"/>
<text x="956.5" y="899" text-anchor="middle" font-size="13" font-weight="bold" fill="#111">3</text>
<circle cx="1184.5" cy="894" r="12.3" fill="#fdf3dc" stroke="#111" stroke-width="1.1"/>
<text x="1184.5" y="899" text-anchor="middle" font-size="13" font-weight="bold" fill="#111">4</text>
<circle cx="1412.5" cy="894" r="12.3" fill="#fdf3dc" stroke="#111" stroke-width="1.1"/>
<text x="1412.5" y="899" text-anchor="middle" font-size="13" font-weight="bold" fill="#111">5</text>
<text x="496" y="942" font-size="12" font-weight="bold" fill="#111" letter-spacing="-0.4">PORTICO: A</text>
<path d="M496 944H562" stroke="#111" stroke-width="1.2"/>
<g fill="#ff8888" stroke="#560000" stroke-width="1" stroke-linejoin="miter">
<polygon points="500.5,688.5 500.5,639.4 518.5,652.2 536.5,664 554.5,671.6 570.5,677.8 588.5,683.4 603.5,688.5 603.5,688.5"/>
<polygon points="604.5,688.5 604.5,688.5 605.5,688.5 605.5,688.5"/>
<polygon points="606.5,688.5 606.5,688.5 607.5,688.5 607.5,688.5"/>
<polygon points="608.5,688.5 608.5,688.5 609.5,688.5 609.5,688.5"/>
<polygon points="610.5,688.5 610.5,688.5 611.5,688.5 611.5,688.5"/>
<polygon points="612.5,688.5 612.5,688.5 613.5,688.5 613.5,688.5"/>
<polygon points="614.5,688.5 614.5,688.5 615.5,688.5 615.5,688.5"/>
<polygon points="616.5,688.5 616.5,688.5 617.5,688.5 617.5,688.5"/>
<polygon points="618.5,688.5 618.5,688.5 619.5,688.5 619.5,688.5"/>
<polygon points="620.5,688.5 620.5,688.5 621.5,688.5 621.5,688.5"/>
<polygon points="622.5,688.5 622.5,688.5 623.5,688.5 623.5,688.5"/>
<polygon points="624.5,688.5 624.5,688.5 625.5,688.5 625.5,688.5"/>
<polygon points="626.5,688.5 626.5,688.5 627.5,688.5 627.5,688.5"/>
<polygon points="628.5,688.5 628.5,688.5 629.5,688.5 629.5,688.5"/>
<polygon points="630.5,688.5 630.5,688.5 631.5,688.5 631.5,688.5"/>
<polygon points="632.5,688.5 632.5,688.5 633.5,688.5 633.5,688.5"/>
<polygon points="634.5,688.5 634.5,688.5 667.5,677.1 684.5,667.8 701.5,658 717.5,645 728.5,638 728.5,688.5"/>
<polygon points="500.5,688.5 500.5,714.1 539.5,710.3 576.5,709 623.5,699.4 645.5,702.1 677.5,702.8 705.5,706.2 728.5,707.1 728.5,688.5"/>
<polygon points="728.5,688.5 728.5,642 746.5,654 763.5,664.5 781.5,674.5 798.5,680.5 825.5,688.5 825.5,688.5"/>
<polygon points="826.5,688.5 826.5,688.5 827.5,688.5 827.5,688.5"/>
<polygon points="828.5,688.5 828.5,688.5 829.5,688.5 829.5,688.5"/>
<polygon points="830.5,688.5 830.5,688.5 831.5,688.5 831.5,688.5"/>
<polygon points="832.5,688.5 832.5,688.5 833.5,688.5 833.5,688.5"/>
<polygon points="834.5,688.5 834.5,688.5 835.5,688.5 835.5,688.5"/>
<polygon points="836.5,688.5 836.5,688.5 837.5,688.5 837.5,688.5"/>
<polygon points="838.5,688.5 838.5,688.5 839.5,688.5 839.5,688.5"/>
<polygon points="840.5,688.5 840.5,688.5 841.5,688.5 841.5,688.5"/>
<polygon points="842.5,688.5 842.5,688.5 843.5,688.5 843.5,688.5"/>
<polygon points="844.5,688.5 844.5,688.5 845.5,688.5 845.5,688.5"/>
<polygon points="846.5,688.5 846.5,688.5 847.5,688.5 847.5,688.5"/>
<polygon points="848.5,688.5 848.5,688.5 849.5,688.5 849.5,688.5"/>
<polygon points="850.5,688.5 850.5,688.5 851.5,688.5 851.5,688.5"/>
<polygon points="852.5,688.5 852.5,688.5 853.5,688.5 853.5,688.5"/>
<polygon points="854.5,688.5 854.5,688.5 855.5,688.5 855.5,688.5"/>
<polygon points="856.5,688.5 856.5,688.5 857.5,688.5 857.5,688.5"/>
<polygon points="858.5,688.5 858.5,688.5 859.5,688.5 859.5,688.5"/>
<polygon points="860.5,688.5 860.5,688.1 885.5,680 911.5,669.5 929.5,660.7 938.5,653.6 950.5,646.9 956.5,642.5 956.5,688.5"/>
<polygon points="728.5,688.5 728.5,704.8 745.5,704.2 775.5,701.4 799.5,702.1 841.5,698 865.5,702.1 906.5,702.8 940.5,705.5 956.5,706.3 956.5,688.5"/>
<polygon points="956.5,688.5 956.5,642.5 962.5,646.9 974.5,653.6 983.5,660.7 1001.5,669.5 1027.5,680 1053.5,688.5 1053.5,688.5"/>
<polygon points="1054.5,688.5 1054.5,688.5 1055.5,688.5 1055.5,688.5"/>
<polygon points="1056.5,688.5 1056.5,688.5 1057.5,688.5 1057.5,688.5"/>
<polygon points="1058.5,688.5 1058.5,688.5 1059.5,688.5 1059.5,688.5"/>
<polygon points="1060.5,688.5 1060.5,688.5 1061.5,688.5 1061.5,688.5"/>
<polygon points="1062.5,688.5 1062.5,688.5 1063.5,688.5 1063.5,688.5"/>
<polygon points="1064.5,688.5 1064.5,688.5 1065.5,688.5 1065.5,688.5"/>
<polygon points="1066.5,688.5 1066.5,688.5 1067.5,688.5 1067.5,688.5"/>
<polygon points="1068.5,688.5 1068.5,688.5 1069.5,688.5 1069.5,688.5"/>
<polygon points="1070.5,688.5 1070.5,688.5 1071.5,688.5 1071.5,688.5"/>
<polygon points="1072.5,688.5 1072.5,688.5 1073.5,688.5 1073.5,688.5"/>
<polygon points="1074.5,688.5 1074.5,688.5 1075.5,688.5 1075.5,688.5"/>
<polygon points="1076.5,688.5 1076.5,688.5 1077.5,688.5 1077.5,688.5"/>
<polygon points="1078.5,688.5 1078.5,688.5 1079.5,688.5 1079.5,688.5"/>
<polygon points="1080.5,688.5 1080.5,688.5 1081.5,688.5 1081.5,688.5"/>
<polygon points="1082.5,688.5 1082.5,688.5 1083.5,688.5 1083.5,688.5"/>
<polygon points="1084.5,688.5 1084.5,688.5 1085.5,688.5 1085.5,688.5"/>
<polygon points="1086.5,688.5 1086.5,688.5 1087.5,688.5 1087.5,688.5"/>
<polygon points="1088.5,688.5 1088.5,688.3 1114.5,680.5 1131.5,674.5 1149.5,664.5 1166.5,654 1184.5,642 1184.5,688.5"/>
<polygon points="956.5,688.5 956.5,706.3 972.5,705.5 1006.5,702.8 1047.5,702.1 1071.5,698 1113.5,702.1 1137.5,701.4 1167.5,704.2 1184.5,704.8 1184.5,688.5"/>
<polygon points="1184.5,688.5 1184.5,638 1195.5,645 1211.5,658 1228.5,667.8 1245.5,677.1 1278.5,688.5 1278.5,688.5"/>
<polygon points="1279.5,688.5 1279.5,688.5 1280.5,688.5 1280.5,688.5"/>
<polygon points="1281.5,688.5 1281.5,688.5 1282.5,688.5 1282.5,688.5"/>
<polygon points="1283.5,688.5 1283.5,688.5 1284.5,688.5 1284.5,688.5"/>
<polygon points="1285.5,688.5 1285.5,688.5 1286.5,688.5 1286.5,688.5"/>
<polygon points="1287.5,688.5 1287.5,688.5 1288.5,688.5 1288.5,688.5"/>
<polygon points="1289.5,688.5 1289.5,688.5 1290.5,688.5 1290.5,688.5"/>
<polygon points="1291.5,688.5 1291.5,688.5 1292.5,688.5 1292.5,688.5"/>
<polygon points="1293.5,688.5 1293.5,688.5 1294.5,688.5 1294.5,688.5"/>
<polygon points="1295.5,688.5 1295.5,688.5 1296.5,688.5 1296.5,688.5"/>
<polygon points="1297.5,688.5 1297.5,688.5 1298.5,688.5 1298.5,688.5"/>
<polygon points="1299.5,688.5 1299.5,688.5 1300.5,688.5 1300.5,688.5"/>
<polygon points="1301.5,688.5 1301.5,688.5 1302.5,688.5 1302.5,688.5"/>
<polygon points="1303.5,688.5 1303.5,688.5 1304.5,688.5 1304.5,688.5"/>
<polygon points="1305.5,688.5 1305.5,688.5 1306.5,688.5 1306.5,688.5"/>
<polygon points="1307.5,688.5 1307.5,688.5 1308.5,688.5 1308.5,688.5"/>
<polygon points="1309.5,688.5 1309.5,688.5 1324.5,683.4 1342.5,677.8 1358.5,671.6 1376.5,664 1394.5,652.2 1412.5,639.4 1412.5,688.5"/>
<polygon points="1184.5,688.5 1184.5,707.1 1207.5,706.2 1235.5,702.8 1267.5,702.1 1289.5,699.4 1336.5,709 1373.5,710.3 1412.5,714.1 1412.5,688.5"/>
<polygon points="500.5,574.5 500.5,528.1 535.5,550.6 553.5,560 570.5,565.7 601.5,574.5 601.5,574.5"/>
<polygon points="602.5,574.5 602.5,574.5 603.5,574.5 603.5,574.5"/>
<polygon points="604.5,574.5 604.5,574.5 605.5,574.5 605.5,574.5"/>
<polygon points="606.5,574.5 606.5,574.5 607.5,574.5 607.5,574.5"/>
<polygon points="608.5,574.5 608.5,574.5 609.5,574.5 609.5,574.5"/>
<polygon points="610.5,574.5 610.5,574.5 611.5,574.5 611.5,574.5"/>
<polygon points="612.5,574.5 612.5,574.5 613.5,574.5 613.5,574.5"/>
<polygon points="614.5,574.5 614.5,574.5 615.5,574.5 615.5,574.5"/>
<polygon points="616.5,574.5 616.5,574.5 617.5,574.5 617.5,574.5"/>
<polygon points="618.5,574.5 618.5,574.5 619.5,574.5 619.5,574.5"/>
<polygon points="620.5,574.5 620.5,574.5 621.5,574.5 621.5,574.5"/>
<polygon points="622.5,574.5 622.5,574.5 623.5,574.5 623.5,574.5"/>
<polygon points="624.5,574.5 624.5,574.5 625.5,574.5 625.5,574.5"/>
<polygon points="626.5,574.5 626.5,574.5 627.5,574.5 627.5,574.5"/>
<polygon points="628.5,574.5 628.5,574.5 629.5,574.5 629.5,574.5"/>
<polygon points="630.5,574.5 630.5,574.5 631.5,574.5 631.5,574.5"/>
<polygon points="632.5,574.5 632.5,574.5 633.5,574.5 633.5,574.5"/>
<polygon points="634.5,574.5 634.5,574.5 635.5,574.5 635.5,574.5"/>
<polygon points="636.5,574.5 636.5,574.5 637.5,574.5 637.5,574.5"/>
<polygon points="638.5,574.5 638.5,574.5 658.5,567.8 676.5,560.1 693.5,551.2 710.5,540.5 725.5,529.9 728.5,528.5 728.5,574.5"/>
<polygon points="500.5,574.5 500.5,594.8 598.5,589 619.5,585.4 644.5,587.8 678.5,587.5 728.5,590.9 728.5,574.5"/>
<polygon points="728.5,574.5 728.5,530 763.5,553 781.5,561.6 798.5,567.6 816.5,572 824.5,574.5 824.5,574.5"/>
<polygon points="825.5,574.5 825.5,574.5 826.5,574.5 826.5,574.5"/>
<polygon points="827.5,574.5 827.5,574.5 828.5,574.5 828.5,574.5"/>
<polygon points="829.5,574.5 829.5,574.5 830.5,574.5 830.5,574.5"/>
<polygon points="831.5,574.5 831.5,574.5 832.5,574.5 832.5,574.5"/>
<polygon points="833.5,574.5 833.5,574.5 834.5,574.5 834.5,574.5"/>
<polygon points="835.5,574.5 835.5,574.5 836.5,574.5 836.5,574.5"/>
<polygon points="837.5,574.5 837.5,574.5 838.5,574.5 838.5,574.5"/>
<polygon points="839.5,574.5 839.5,574.5 840.5,574.5 840.5,574.5"/>
<polygon points="841.5,574.5 841.5,574.5 842.5,574.5 842.5,574.5"/>
<polygon points="843.5,574.5 843.5,574.5 844.5,574.5 844.5,574.5"/>
<polygon points="845.5,574.5 845.5,574.5 846.5,574.5 846.5,574.5"/>
<polygon points="847.5,574.5 847.5,574.5 848.5,574.5 848.5,574.5"/>
<polygon points="849.5,574.5 849.5,574.5 850.5,574.5 850.5,574.5"/>
<polygon points="851.5,574.5 851.5,574.5 852.5,574.5 852.5,574.5"/>
<polygon points="853.5,574.5 853.5,574.5 854.5,574.5 854.5,574.5"/>
<polygon points="855.5,574.5 855.5,574.5 856.5,574.5 856.5,574.5"/>
<polygon points="857.5,574.5 857.5,574.5 858.5,574.5 858.5,574.5"/>
<polygon points="859.5,574.5 859.5,574.5 860.5,574.5 860.5,574.5"/>
<polygon points="861.5,574.5 861.5,574.5 894.5,564.3 911.5,557.6 929.5,547 952.5,532.1 956.5,530.5 956.5,574.5"/>
<polygon points="728.5,574.5 728.5,590 744.5,589.2 768.5,587.5 819.5,587.5 840.5,584.3 866.5,587.1 910.5,587.5 928.5,589.2 956.5,590.2 956.5,574.5"/>
<polygon points="956.5,574.5 956.5,530.5 960.5,532.1 983.5,547 1001.5,557.6 1018.5,564.3 1051.5,574.5 1051.5,574.5"/>
<polygon points="1052.5,574.5 1052.5,574.5 1053.5,574.5 1053.5,574.5"/>
<polygon points="1054.5,574.5 1054.5,574.5 1055.5,574.5 1055.5,574.5"/>
<polygon points="1056.5,574.5 1056.5,574.5 1057.5,574.5 1057.5,574.5"/>
<polygon points="1058.5,574.5 1058.5,574.5 1059.5,574.5 1059.5,574.5"/>
<polygon points="1060.5,574.5 1060.5,574.5 1061.5,574.5 1061.5,574.5"/>
<polygon points="1062.5,574.5 1062.5,574.5 1063.5,574.5 1063.5,574.5"/>
<polygon points="1064.5,574.5 1064.5,574.5 1065.5,574.5 1065.5,574.5"/>
<polygon points="1066.5,574.5 1066.5,574.5 1067.5,574.5 1067.5,574.5"/>
<polygon points="1068.5,574.5 1068.5,574.5 1069.5,574.5 1069.5,574.5"/>
<polygon points="1070.5,574.5 1070.5,574.5 1071.5,574.5 1071.5,574.5"/>
<polygon points="1072.5,574.5 1072.5,574.5 1073.5,574.5 1073.5,574.5"/>
<polygon points="1074.5,574.5 1074.5,574.5 1075.5,574.5 1075.5,574.5"/>
<polygon points="1076.5,574.5 1076.5,574.5 1077.5,574.5 1077.5,574.5"/>
<polygon points="1078.5,574.5 1078.5,574.5 1079.5,574.5 1079.5,574.5"/>
<polygon points="1080.5,574.5 1080.5,574.5 1081.5,574.5 1081.5,574.5"/>
<polygon points="1082.5,574.5 1082.5,574.5 1083.5,574.5 1083.5,574.5"/>
<polygon points="1084.5,574.5 1084.5,574.5 1085.5,574.5 1085.5,574.5"/>
<polygon points="1086.5,574.5 1086.5,574.5 1087.5,574.5 1087.5,574.5"/>
<polygon points="1088.5,574.5 1088.5,574.5 1096.5,572 1114.5,567.6 1131.5,561.6 1149.5,553 1184.5,530 1184.5,574.5"/>
<polygon points="956.5,574.5 956.5,590.2 984.5,589.2 1002.5,587.5 1046.5,587.1 1072.5,584.3 1093.5,587.5 1144.5,587.5 1168.5,589.2 1184.5,590 1184.5,574.5"/>
<polygon points="1184.5,574.5 1184.5,528.5 1187.5,529.9 1202.5,540.5 1219.5,551.2 1236.5,560.1 1254.5,567.8 1274.5,574.5 1274.5,574.5"/>
<polygon points="1275.5,574.5 1275.5,574.5 1276.5,574.5 1276.5,574.5"/>
<polygon points="1277.5,574.5 1277.5,574.5 1278.5,574.5 1278.5,574.5"/>
<polygon points="1279.5,574.5 1279.5,574.5 1280.5,574.5 1280.5,574.5"/>
<polygon points="1281.5,574.5 1281.5,574.5 1282.5,574.5 1282.5,574.5"/>
<polygon points="1283.5,574.5 1283.5,574.5 1284.5,574.5 1284.5,574.5"/>
<polygon points="1285.5,574.5 1285.5,574.5 1286.5,574.5 1286.5,574.5"/>
<polygon points="1287.5,574.5 1287.5,574.5 1288.5,574.5 1288.5,574.5"/>
<polygon points="1289.5,574.5 1289.5,574.5 1290.5,574.5 1290.5,574.5"/>
<polygon points="1291.5,574.5 1291.5,574.5 1292.5,574.5 1292.5,574.5"/>
<polygon points="1293.5,574.5 1293.5,574.5 1294.5,574.5 1294.5,574.5"/>
<polygon points="1295.5,574.5 1295.5,574.5 1296.5,574.5 1296.5,574.5"/>
<polygon points="1297.5,574.5 1297.5,574.5 1298.5,574.5 1298.5,574.5"/>
<polygon points="1299.5,574.5 1299.5,574.5 1300.5,574.5 1300.5,574.5"/>
<polygon points="1301.5,574.5 1301.5,574.5 1302.5,574.5 1302.5,574.5"/>
<polygon points="1303.5,574.5 1303.5,574.5 1304.5,574.5 1304.5,574.5"/>
<polygon points="1305.5,574.5 1305.5,574.5 1306.5,574.5 1306.5,574.5"/>
<polygon points="1307.5,574.5 1307.5,574.5 1308.5,574.5 1308.5,574.5"/>
<polygon points="1309.5,574.5 1309.5,574.5 1310.5,574.5 1310.5,574.5"/>
<polygon points="1311.5,574.5 1311.5,574.5 1342.5,565.7 1359.5,560 1377.5,550.6 1412.5,528.1 1412.5,574.5"/>
<polygon points="1184.5,574.5 1184.5,590.9 1234.5,587.5 1268.5,587.8 1293.5,585.4 1314.5,589 1412.5,594.8 1412.5,574.5"/>
<polygon points="500.5,467.5 500.5,427.5 524.5,440.2 537.5,446.4 549.5,451.6 561.5,456.3 574.5,461 588.5,465.4 596.5,467.5 596.5,467.5"/>
<polygon points="597.5,467.5 597.5,467.5 598.5,467.5 598.5,467.5"/>
<polygon points="599.5,467.5 599.5,467.5 600.5,467.5 600.5,467.5"/>
<polygon points="601.5,467.5 601.5,467.5 602.5,467.5 602.5,467.5"/>
<polygon points="603.5,467.5 603.5,467.5 604.5,467.5 604.5,467.5"/>
<polygon points="605.5,467.5 605.5,467.5 606.5,467.5 606.5,467.5"/>
<polygon points="607.5,467.5 607.5,467.5 608.5,467.5 608.5,467.5"/>
<polygon points="609.5,467.5 609.5,467.5 610.5,467.5 610.5,467.5"/>
<polygon points="611.5,467.5 611.5,467.5 612.5,467.5 612.5,467.5"/>
<polygon points="613.5,467.5 613.5,467.5 614.5,467.5 614.5,467.5"/>
<polygon points="615.5,467.5 615.5,467.5 616.5,467.5 616.5,467.5"/>
<polygon points="617.5,467.5 617.5,467.5 618.5,467.5 618.5,467.5"/>
<polygon points="619.5,467.5 619.5,467.5 620.5,467.5 620.5,467.5"/>
<polygon points="621.5,467.5 621.5,467.5 622.5,467.5 622.5,467.5"/>
<polygon points="623.5,467.5 623.5,467.5 624.5,467.5 624.5,467.5"/>
<polygon points="625.5,467.5 625.5,467.5 626.5,467.5 626.5,467.5"/>
<polygon points="627.5,467.5 627.5,467.5 628.5,467.5 628.5,467.5"/>
<polygon points="629.5,467.5 629.5,467.5 630.5,467.5 630.5,467.5"/>
<polygon points="631.5,467.5 631.5,467.5 632.5,467.5 632.5,467.5"/>
<polygon points="633.5,467.5 633.5,467.5 634.5,467.5 634.5,467.5"/>
<polygon points="635.5,467.5 635.5,467.5 636.5,467.5 636.5,467.5"/>
<polygon points="637.5,467.5 637.5,467.5 638.5,467.5 638.5,467.5"/>
<polygon points="639.5,467.5 639.5,467.5 640.5,467.5 640.5,467.5"/>
<polygon points="641.5,467.5 641.5,467.3 652.5,463.9 663.5,460 684.5,451.3 706.5,440.5 728.5,428 728.5,467.5"/>
<polygon points="500.5,467.5 500.5,479.8 539.5,479.8 559.5,481.5 599.5,481.5 612.5,479.5 637.5,479.5 671.5,478.2 712.5,478.7 728.5,478.5 728.5,467.5"/>
<polygon points="728.5,467.5 728.5,429 750.5,440.9 773.5,451.6 795.5,460.2 806.5,463.9 818.5,467.5 818.5,467.5"/>
<polygon points="819.5,467.5 819.5,467.5 820.5,467.5 820.5,467.5"/>
<polygon points="821.5,467.5 821.5,467.5 822.5,467.5 822.5,467.5"/>
<polygon points="823.5,467.5 823.5,467.5 824.5,467.5 824.5,467.5"/>
<polygon points="825.5,467.5 825.5,467.5 826.5,467.5 826.5,467.5"/>
<polygon points="827.5,467.5 827.5,467.5 828.5,467.5 828.5,467.5"/>
<polygon points="829.5,467.5 829.5,467.5 830.5,467.5 830.5,467.5"/>
<polygon points="831.5,467.5 831.5,467.5 832.5,467.5 832.5,467.5"/>
<polygon points="833.5,467.5 833.5,467.5 834.5,467.5 834.5,467.5"/>
<polygon points="835.5,467.5 835.5,467.5 836.5,467.5 836.5,467.5"/>
<polygon points="837.5,467.5 837.5,467.5 838.5,467.5 838.5,467.5"/>
<polygon points="839.5,467.5 839.5,467.5 840.5,467.5 840.5,467.5"/>
<polygon points="841.5,467.5 841.5,467.5 842.5,467.5 842.5,467.5"/>
<polygon points="843.5,467.5 843.5,467.5 844.5,467.5 844.5,467.5"/>
<polygon points="845.5,467.5 845.5,467.5 846.5,467.5 846.5,467.5"/>
<polygon points="847.5,467.5 847.5,467.5 848.5,467.5 848.5,467.5"/>
<polygon points="849.5,467.5 849.5,467.5 850.5,467.5 850.5,467.5"/>
<polygon points="851.5,467.5 851.5,467.5 852.5,467.5 852.5,467.5"/>
<polygon points="853.5,467.5 853.5,467.5 854.5,467.5 854.5,467.5"/>
<polygon points="855.5,467.5 855.5,467.5 856.5,467.5 856.5,467.5"/>
<polygon points="857.5,467.5 857.5,467.5 858.5,467.5 858.5,467.5"/>
<polygon points="859.5,467.5 859.5,467.5 860.5,467.5 860.5,467.5"/>
<polygon points="861.5,467.5 861.5,467.5 862.5,467.5 862.5,467.5"/>
<polygon points="863.5,467.5 863.5,467.5 864.5,467.5 864.5,467.5"/>
<polygon points="865.5,467.5 865.5,467.5 866.5,467.5 866.5,467.5"/>
<polygon points="867.5,467.5 867.5,467.3 889.5,460.2 901.5,455.7 912.5,451.1 934.5,440.6 956.5,428.5 956.5,467.5"/>
<polygon points="728.5,467.5 728.5,477.5 782.5,477.3 803.5,479.1 837.5,478.2 871.5,479.1 906.5,477.3 956.5,478.5 956.5,467.5"/>
<polygon points="956.5,467.5 956.5,428.5 979.5,441.1 1001.5,451.5 1013.5,456.5 1024.5,460.6 1036.5,464.6 1046.5,467.5 1046.5,467.5"/>
<polygon points="1047.5,467.5 1047.5,467.5 1048.5,467.5 1048.5,467.5"/>
<polygon points="1049.5,467.5 1049.5,467.5 1050.5,467.5 1050.5,467.5"/>
<polygon points="1051.5,467.5 1051.5,467.5 1052.5,467.5 1052.5,467.5"/>
<polygon points="1053.5,467.5 1053.5,467.5 1054.5,467.5 1054.5,467.5"/>
<polygon points="1055.5,467.5 1055.5,467.5 1056.5,467.5 1056.5,467.5"/>
<polygon points="1057.5,467.5 1057.5,467.5 1058.5,467.5 1058.5,467.5"/>
<polygon points="1059.5,467.5 1059.5,467.5 1060.5,467.5 1060.5,467.5"/>
<polygon points="1061.5,467.5 1061.5,467.5 1062.5,467.5 1062.5,467.5"/>
<polygon points="1063.5,467.5 1063.5,467.5 1064.5,467.5 1064.5,467.5"/>
<polygon points="1065.5,467.5 1065.5,467.5 1066.5,467.5 1066.5,467.5"/>
<polygon points="1067.5,467.5 1067.5,467.5 1068.5,467.5 1068.5,467.5"/>
<polygon points="1069.5,467.5 1069.5,467.5 1070.5,467.5 1070.5,467.5"/>
<polygon points="1071.5,467.5 1071.5,467.5 1072.5,467.5 1072.5,467.5"/>
<polygon points="1073.5,467.5 1073.5,467.5 1074.5,467.5 1074.5,467.5"/>
<polygon points="1075.5,467.5 1075.5,467.5 1076.5,467.5 1076.5,467.5"/>
<polygon points="1077.5,467.5 1077.5,467.5 1078.5,467.5 1078.5,467.5"/>
<polygon points="1079.5,467.5 1079.5,467.5 1080.5,467.5 1080.5,467.5"/>
<polygon points="1081.5,467.5 1081.5,467.5 1082.5,467.5 1082.5,467.5"/>
<polygon points="1083.5,467.5 1083.5,467.5 1084.5,467.5 1084.5,467.5"/>
<polygon points="1085.5,467.5 1085.5,467.5 1086.5,467.5 1086.5,467.5"/>
<polygon points="1087.5,467.5 1087.5,467.5 1088.5,467.5 1088.5,467.5"/>
<polygon points="1089.5,467.5 1089.5,467.5 1090.5,467.5 1090.5,467.5"/>
<polygon points="1091.5,467.5 1091.5,467.5 1092.5,467.5 1092.5,467.5"/>
<polygon points="1093.5,467.5 1093.5,467.5 1094.5,467.5 1094.5,467.5"/>
<polygon points="1095.5,467.5 1095.5,467.2 1106.5,463.9 1118.5,459.9 1140.5,451.2 1162.5,440.9 1184.5,429 1184.5,467.5"/>
<polygon points="956.5,467.5 956.5,478.5 1006.5,477.3 1041.5,479.1 1075.5,478.2 1109.5,479.1 1130.5,477.3 1184.5,477.5 1184.5,467.5"/>
<polygon points="1184.5,467.5 1184.5,428 1206.5,440.5 1228.5,451.3 1240.5,456.5 1251.5,460.7 1263.5,464.9 1272.5,467.5 1272.5,467.5"/>
<polygon points="1273.5,467.5 1273.5,467.5 1274.5,467.5 1274.5,467.5"/>
<polygon points="1275.5,467.5 1275.5,467.5 1276.5,467.5 1276.5,467.5"/>
<polygon points="1277.5,467.5 1277.5,467.5 1278.5,467.5 1278.5,467.5"/>
<polygon points="1279.5,467.5 1279.5,467.5 1280.5,467.5 1280.5,467.5"/>
<polygon points="1281.5,467.5 1281.5,467.5 1282.5,467.5 1282.5,467.5"/>
<polygon points="1283.5,467.5 1283.5,467.5 1284.5,467.5 1284.5,467.5"/>
<polygon points="1285.5,467.5 1285.5,467.5 1286.5,467.5 1286.5,467.5"/>
<polygon points="1287.5,467.5 1287.5,467.5 1288.5,467.5 1288.5,467.5"/>
<polygon points="1289.5,467.5 1289.5,467.5 1290.5,467.5 1290.5,467.5"/>
<polygon points="1291.5,467.5 1291.5,467.5 1292.5,467.5 1292.5,467.5"/>
<polygon points="1293.5,467.5 1293.5,467.5 1294.5,467.5 1294.5,467.5"/>
<polygon points="1295.5,467.5 1295.5,467.5 1296.5,467.5 1296.5,467.5"/>
<polygon points="1297.5,467.5 1297.5,467.5 1298.5,467.5 1298.5,467.5"/>
<polygon points="1299.5,467.5 1299.5,467.5 1300.5,467.5 1300.5,467.5"/>
<polygon points="1301.5,467.5 1301.5,467.5 1302.5,467.5 1302.5,467.5"/>
<polygon points="1303.5,467.5 1303.5,467.5 1304.5,467.5 1304.5,467.5"/>
<polygon points="1305.5,467.5 1305.5,467.5 1306.5,467.5 1306.5,467.5"/>
<polygon points="1307.5,467.5 1307.5,467.5 1308.5,467.5 1308.5,467.5"/>
<polygon points="1309.5,467.5 1309.5,467.5 1310.5,467.5 1310.5,467.5"/>
<polygon points="1311.5,467.5 1311.5,467.5 1312.5,467.5 1312.5,467.5"/>
<polygon points="1313.5,467.5 1313.5,467.5 1314.5,467.5 1314.5,467.5"/>
<polygon points="1315.5,467.5 1315.5,467.5 1316.5,467.5 1316.5,467.5"/>
<polygon points="1317.5,467.5 1317.5,467.4 1329.5,463.9 1341.5,460 1364.5,451.1 1376.5,445.9 1388.5,440.2 1412.5,427.5 1412.5,467.5"/>
<polygon points="1184.5,467.5 1184.5,478.5 1200.5,478.7 1241.5,478.2 1275.5,479.5 1300.5,479.5 1313.5,481.5 1353.5,481.5 1373.5,479.8 1412.5,479.8 1412.5,467.5"/>
<polygon points="500.5,361.5 500.5,327.6 511.5,333.7 522.5,339.3 533.5,344.4 544.5,348.9 555.5,352.9 566.5,356.3 578.5,359.4 588.5,361.5 588.5,361.5"/>
<polygon points="589.5,361.5 589.5,361.5 590.5,361.5 590.5,361.5"/>
<polygon points="591.5,361.5 591.5,361.5 592.5,361.5 592.5,361.5"/>
<polygon points="593.5,361.5 593.5,361.5 594.5,361.5 594.5,361.5"/>
<polygon points="595.5,361.5 595.5,361.5 596.5,361.5 596.5,361.5"/>
<polygon points="597.5,361.5 597.5,361.5 598.5,361.5 598.5,361.5"/>
<polygon points="599.5,361.5 599.5,361.5 600.5,361.5 600.5,361.5"/>
<polygon points="601.5,361.5 601.5,361.5 602.5,361.5 602.5,361.5"/>
<polygon points="603.5,361.5 603.5,361.5 604.5,361.5 604.5,361.5"/>
<polygon points="605.5,361.5 605.5,361.5 606.5,361.5 606.5,361.5"/>
<polygon points="607.5,361.5 607.5,361.5 608.5,361.5 608.5,361.5"/>
<polygon points="609.5,361.5 609.5,361.5 610.5,361.5 610.5,361.5"/>
<polygon points="611.5,361.5 611.5,361.5 612.5,361.5 612.5,361.5"/>
<polygon points="613.5,361.5 613.5,361.5 614.5,361.5 614.5,361.5"/>
<polygon points="615.5,361.5 615.5,361.5 616.5,361.5 616.5,361.5"/>
<polygon points="617.5,361.5 617.5,361.5 618.5,361.5 618.5,361.5"/>
<polygon points="619.5,361.5 619.5,361.5 620.5,361.5 620.5,361.5"/>
<polygon points="621.5,361.5 621.5,361.5 622.5,361.5 622.5,361.5"/>
<polygon points="623.5,361.5 623.5,361.5 624.5,361.5 624.5,361.5"/>
<polygon points="625.5,361.5 625.5,361.5 626.5,361.5 626.5,361.5"/>
<polygon points="627.5,361.5 627.5,361.5 628.5,361.5 628.5,361.5"/>
<polygon points="629.5,361.5 629.5,361.5 630.5,361.5 630.5,361.5"/>
<polygon points="631.5,361.5 631.5,361.5 632.5,361.5 632.5,361.5"/>
<polygon points="633.5,361.5 633.5,361.5 634.5,361.5 634.5,361.5"/>
<polygon points="635.5,361.5 635.5,361.5 636.5,361.5 636.5,361.5"/>
<polygon points="637.5,361.5 637.5,361.5 638.5,361.5 638.5,361.5"/>
<polygon points="639.5,361.5 639.5,361.5 640.5,361.5 640.5,361.5"/>
<polygon points="641.5,361.5 641.5,361.5 642.5,361.5 642.5,361.5"/>
<polygon points="643.5,361.5 643.5,361.5 644.5,361.5 644.5,361.5"/>
<polygon points="645.5,361.5 645.5,361.5 646.5,361.5 646.5,361.5"/>
<polygon points="647.5,361.5 647.5,361.5 656.5,359.5 667.5,356.4 677.5,353.1 687.5,349.2 697.5,344.8 707.5,339.9 718.5,334 728.5,328 728.5,361.5"/>
<polygon points="500.5,361.5 500.5,367 523.5,369 541.5,369.7 558.5,371.1 575.5,373.1 609.5,373.1 637.5,371.7 691.5,367.6 728.5,366.5 728.5,361.5"/>
<polygon points="728.5,361.5 728.5,328 739.5,334.2 750.5,339.8 760.5,344.4 771.5,348.9 782.5,353 793.5,356.4 804.5,359.3 814.5,361.5 814.5,361.5"/>
<polygon points="815.5,361.5 815.5,361.5 816.5,361.5 816.5,361.5"/>
<polygon points="817.5,361.5 817.5,361.5 818.5,361.5 818.5,361.5"/>
<polygon points="819.5,361.5 819.5,361.5 820.5,361.5 820.5,361.5"/>
<polygon points="821.5,361.5 821.5,361.5 822.5,361.5 822.5,361.5"/>
<polygon points="823.5,361.5 823.5,361.5 824.5,361.5 824.5,361.5"/>
<polygon points="825.5,361.5 825.5,361.5 826.5,361.5 826.5,361.5"/>
<polygon points="827.5,361.5 827.5,361.5 828.5,361.5 828.5,361.5"/>
<polygon points="829.5,361.5 829.5,361.5 830.5,361.5 830.5,361.5"/>
<polygon points="831.5,361.5 831.5,361.5 832.5,361.5 832.5,361.5"/>
<polygon points="833.5,361.5 833.5,361.5 834.5,361.5 834.5,361.5"/>
<polygon points="835.5,361.5 835.5,361.5 836.5,361.5 836.5,361.5"/>
<polygon points="837.5,361.5 837.5,361.5 838.5,361.5 838.5,361.5"/>
<polygon points="839.5,361.5 839.5,361.5 840.5,361.5 840.5,361.5"/>
<polygon points="841.5,361.5 841.5,361.5 842.5,361.5 842.5,361.5"/>
<polygon points="843.5,361.5 843.5,361.5 844.5,361.5 844.5,361.5"/>
<polygon points="845.5,361.5 845.5,361.5 846.5,361.5 846.5,361.5"/>
<polygon points="847.5,361.5 847.5,361.5 848.5,361.5 848.5,361.5"/>
<polygon points="849.5,361.5 849.5,361.5 850.5,361.5 850.5,361.5"/>
<polygon points="851.5,361.5 851.5,361.5 852.5,361.5 852.5,361.5"/>
<polygon points="853.5,361.5 853.5,361.5 854.5,361.5 854.5,361.5"/>
<polygon points="855.5,361.5 855.5,361.5 856.5,361.5 856.5,361.5"/>
<polygon points="857.5,361.5 857.5,361.5 858.5,361.5 858.5,361.5"/>
<polygon points="859.5,361.5 859.5,361.5 860.5,361.5 860.5,361.5"/>
<polygon points="861.5,361.5 861.5,361.5 862.5,361.5 862.5,361.5"/>
<polygon points="863.5,361.5 863.5,361.5 864.5,361.5 864.5,361.5"/>
<polygon points="865.5,361.5 865.5,361.5 866.5,361.5 866.5,361.5"/>
<polygon points="867.5,361.5 867.5,361.5 868.5,361.5 868.5,361.5"/>
<polygon points="869.5,361.5 869.5,361.5 870.5,361.5 870.5,361.5"/>
<polygon points="871.5,361.5 871.5,361.4 881.5,359.2 892.5,356.2 903.5,352.6 913.5,348.8 924.5,344.2 935.5,339 946.5,333.2 956.5,327.5 956.5,361.5"/>
<polygon points="728.5,361.5 728.5,367.5 741.5,367.6 762.5,368.3 813.5,372.4 857.5,372.4 913.5,368.3 940.5,367 956.5,367.5 956.5,361.5"/>
<polygon points="956.5,361.5 956.5,327.5 966.5,333.2 977.5,339 988.5,344.2 999.5,348.8 1010.5,352.9 1021.5,356.4 1033.5,359.6 1042.5,361.5 1042.5,361.5"/>
<polygon points="1043.5,361.5 1043.5,361.5 1044.5,361.5 1044.5,361.5"/>
<polygon points="1045.5,361.5 1045.5,361.5 1046.5,361.5 1046.5,361.5"/>
<polygon points="1047.5,361.5 1047.5,361.5 1048.5,361.5 1048.5,361.5"/>
<polygon points="1049.5,361.5 1049.5,361.5 1050.5,361.5 1050.5,361.5"/>
<polygon points="1051.5,361.5 1051.5,361.5 1052.5,361.5 1052.5,361.5"/>
<polygon points="1053.5,361.5 1053.5,361.5 1054.5,361.5 1054.5,361.5"/>
<polygon points="1055.5,361.5 1055.5,361.5 1056.5,361.5 1056.5,361.5"/>
<polygon points="1057.5,361.5 1057.5,361.5 1058.5,361.5 1058.5,361.5"/>
<polygon points="1059.5,361.5 1059.5,361.5 1060.5,361.5 1060.5,361.5"/>
<polygon points="1061.5,361.5 1061.5,361.5 1062.5,361.5 1062.5,361.5"/>
<polygon points="1063.5,361.5 1063.5,361.5 1064.5,361.5 1064.5,361.5"/>
<polygon points="1065.5,361.5 1065.5,361.5 1066.5,361.5 1066.5,361.5"/>
<polygon points="1067.5,361.5 1067.5,361.5 1068.5,361.5 1068.5,361.5"/>
<polygon points="1069.5,361.5 1069.5,361.5 1070.5,361.5 1070.5,361.5"/>
<polygon points="1071.5,361.5 1071.5,361.5 1072.5,361.5 1072.5,361.5"/>
<polygon points="1073.5,361.5 1073.5,361.5 1074.5,361.5 1074.5,361.5"/>
<polygon points="1075.5,361.5 1075.5,361.5 1076.5,361.5 1076.5,361.5"/>
<polygon points="1077.5,361.5 1077.5,361.5 1078.5,361.5 1078.5,361.5"/>
<polygon points="1079.5,361.5 1079.5,361.5 1080.5,361.5 1080.5,361.5"/>
<polygon points="1081.5,361.5 1081.5,361.5 1082.5,361.5 1082.5,361.5"/>
<polygon points="1083.5,361.5 1083.5,361.5 1084.5,361.5 1084.5,361.5"/>
<polygon points="1085.5,361.5 1085.5,361.5 1086.5,361.5 1086.5,361.5"/>
<polygon points="1087.5,361.5 1087.5,361.5 1088.5,361.5 1088.5,361.5"/>
<polygon points="1089.5,361.5 1089.5,361.5 1090.5,361.5 1090.5,361.5"/>
<polygon points="1091.5,361.5 1091.5,361.5 1092.5,361.5 1092.5,361.5"/>
<polygon points="1093.5,361.5 1093.5,361.5 1094.5,361.5 1094.5,361.5"/>
<polygon points="1095.5,361.5 1095.5,361.5 1096.5,361.5 1096.5,361.5"/>
<polygon points="1097.5,361.5 1097.5,361.5 1098.5,361.5 1098.5,361.5"/>
<polygon points="1099.5,361.5 1099.5,361.3 1109.5,359.1 1120.5,356.1 1131.5,352.6 1141.5,348.9 1152.5,344.4 1162.5,339.8 1173.5,334.2 1184.5,328 1184.5,361.5"/>
<polygon points="956.5,361.5 956.5,367.5 972.5,367 999.5,368.3 1055.5,372.4 1100.5,372.4 1150.5,368.3 1171.5,367.6 1184.5,367.5 1184.5,361.5"/>
<polygon points="1184.5,361.5 1184.5,328 1194.5,334 1205.5,339.9 1215.5,344.8 1225.5,349.2 1235.5,353.1 1245.5,356.4 1256.5,359.5 1265.5,361.5 1265.5,361.5"/>
<polygon points="1266.5,361.5 1266.5,361.5 1267.5,361.5 1267.5,361.5"/>
<polygon points="1268.5,361.5 1268.5,361.5 1269.5,361.5 1269.5,361.5"/>
<polygon points="1270.5,361.5 1270.5,361.5 1271.5,361.5 1271.5,361.5"/>
<polygon points="1272.5,361.5 1272.5,361.5 1273.5,361.5 1273.5,361.5"/>
<polygon points="1274.5,361.5 1274.5,361.5 1275.5,361.5 1275.5,361.5"/>
<polygon points="1276.5,361.5 1276.5,361.5 1277.5,361.5 1277.5,361.5"/>
<polygon points="1278.5,361.5 1278.5,361.5 1279.5,361.5 1279.5,361.5"/>
<polygon points="1280.5,361.5 1280.5,361.5 1281.5,361.5 1281.5,361.5"/>
<polygon points="1282.5,361.5 1282.5,361.5 1283.5,361.5 1283.5,361.5"/>
<polygon points="1284.5,361.5 1284.5,361.5 1285.5,361.5 1285.5,361.5"/>
<polygon points="1286.5,361.5 1286.5,361.5 1287.5,361.5 1287.5,361.5"/>
<polygon points="1288.5,361.5 1288.5,361.5 1289.5,361.5 1289.5,361.5"/>
<polygon points="1290.5,361.5 1290.5,361.5 1291.5,361.5 1291.5,361.5"/>
<polygon points="1292.5,361.5 1292.5,361.5 1293.5,361.5 1293.5,361.5"/>
<polygon points="1294.5,361.5 1294.5,361.5 1295.5,361.5 1295.5,361.5"/>
<polygon points="1296.5,361.5 1296.5,361.5 1297.5,361.5 1297.5,361.5"/>
<polygon points="1298.5,361.5 1298.5,361.5 1299.5,361.5 1299.5,361.5"/>
<polygon points="1300.5,361.5 1300.5,361.5 1301.5,361.5 1301.5,361.5"/>
<polygon points="1302.5,361.5 1302.5,361.5 1303.5,361.5 1303.5,361.5"/>
<polygon points="1304.5,361.5 1304.5,361.5 1305.5,361.5 1305.5,361.5"/>
<polygon points="1306.5,361.5 1306.5,361.5 1307.5,361.5 1307.5,361.5"/>
<polygon points="1308.5,361.5 1308.5,361.5 1309.5,361.5 1309.5,361.5"/>
<polygon points="1310.5,361.5 1310.5,361.5 1311.5,361.5 1311.5,361.5"/>
<polygon points="1312.5,361.5 1312.5,361.5 1313.5,361.5 1313.5,361.5"/>
<polygon points="1314.5,361.5 1314.5,361.5 1315.5,361.5 1315.5,361.5"/>
<polygon points="1316.5,361.5 1316.5,361.5 1317.5,361.5 1317.5,361.5"/>
<polygon points="1318.5,361.5 1318.5,361.5 1319.5,361.5 1319.5,361.5"/>
<polygon points="1320.5,361.5 1320.5,361.5 1321.5,361.5 1321.5,361.5"/>
<polygon points="1322.5,361.5 1322.5,361.5 1323.5,361.5 1323.5,361.5"/>
<polygon points="1324.5,361.5 1324.5,361.5 1334.5,359.4 1346.5,356.3 1357.5,352.9 1368.5,348.9 1379.5,344.4 1390.5,339.3 1401.5,333.7 1412.5,327.6 1412.5,361.5"/>
<polygon points="1184.5,361.5 1184.5,366.5 1221.5,367.6 1275.5,371.7 1303.5,373.1 1337.5,373.1 1354.5,371.1 1371.5,369.7 1389.5,369 1412.5,367 1412.5,361.5"/>
<polygon points="500.5,254.5 500.5,237.1 535.5,247.2 562.5,254.5 562.5,254.5"/>
<polygon points="563.5,254.5 563.5,254.5 564.5,254.5 564.5,254.5"/>
<polygon points="565.5,254.5 565.5,254.5 566.5,254.5 566.5,254.5"/>
<polygon points="567.5,254.5 567.5,254.5 568.5,254.5 568.5,254.5"/>
<polygon points="569.5,254.5 569.5,254.5 570.5,254.5 570.5,254.5"/>
<polygon points="571.5,254.5 571.5,254.5 572.5,254.5 572.5,254.5"/>
<polygon points="573.5,254.5 573.5,254.5 574.5,254.5 574.5,254.5"/>
<polygon points="575.5,254.5 575.5,254.5 576.5,254.5 576.5,254.5"/>
<polygon points="577.5,254.5 577.5,254.5 578.5,254.5 578.5,254.5"/>
<polygon points="579.5,254.5 579.5,254.5 580.5,254.5 580.5,254.5"/>
<polygon points="581.5,254.5 581.5,254.5 582.5,254.5 582.5,254.5"/>
<polygon points="583.5,254.5 583.5,254.5 584.5,254.5 584.5,254.5"/>
<polygon points="585.5,254.5 585.5,254.5 586.5,254.5 586.5,254.5"/>
<polygon points="587.5,254.5 587.5,254.5 588.5,254.5 588.5,254.5"/>
<polygon points="589.5,254.5 589.5,254.5 590.5,254.5 590.5,254.5"/>
<polygon points="591.5,254.5 591.5,254.5 592.5,254.5 592.5,254.5"/>
<polygon points="593.5,254.5 593.5,254.5 594.5,254.5 594.5,254.5"/>
<polygon points="595.5,254.5 595.5,254.5 596.5,254.5 596.5,254.5"/>
<polygon points="597.5,254.5 597.5,254.5 598.5,254.5 598.5,254.5"/>
<polygon points="599.5,254.5 599.5,254.5 600.5,254.5 600.5,254.5"/>
<polygon points="601.5,254.5 601.5,254.5 602.5,254.5 602.5,254.5"/>
<polygon points="603.5,254.5 603.5,254.5 604.5,254.5 604.5,254.5"/>
<polygon points="605.5,254.5 605.5,254.5 606.5,254.5 606.5,254.5"/>
<polygon points="607.5,254.5 607.5,254.5 608.5,254.5 608.5,254.5"/>
<polygon points="609.5,254.5 609.5,254.5 610.5,254.5 610.5,254.5"/>
<polygon points="611.5,254.5 611.5,254.5 612.5,254.5 612.5,254.5"/>
<polygon points="613.5,254.5 613.5,254.5 614.5,254.5 614.5,254.5"/>
<polygon points="615.5,254.5 615.5,254.5 616.5,254.5 616.5,254.5"/>
<polygon points="617.5,254.5 617.5,254.5 618.5,254.5 618.5,254.5"/>
<polygon points="619.5,254.5 619.5,254.5 620.5,254.5 620.5,254.5"/>
<polygon points="621.5,254.5 621.5,254.5 622.5,254.5 622.5,254.5"/>
<polygon points="623.5,254.5 623.5,254.5 624.5,254.5 624.5,254.5"/>
<polygon points="625.5,254.5 625.5,254.5 626.5,254.5 626.5,254.5"/>
<polygon points="627.5,254.5 627.5,254.5 628.5,254.5 628.5,254.5"/>
<polygon points="629.5,254.5 629.5,254.5 630.5,254.5 630.5,254.5"/>
<polygon points="631.5,254.5 631.5,254.5 632.5,254.5 632.5,254.5"/>
<polygon points="633.5,254.5 633.5,254.5 634.5,254.5 634.5,254.5"/>
<polygon points="635.5,254.5 635.5,254.5 636.5,254.5 636.5,254.5"/>
<polygon points="637.5,254.5 637.5,254.5 638.5,254.5 638.5,254.5"/>
<polygon points="639.5,254.5 639.5,254.5 640.5,254.5 640.5,254.5"/>
<polygon points="641.5,254.5 641.5,254.5 642.5,254.5 642.5,254.5"/>
<polygon points="643.5,254.5 643.5,254.5 644.5,254.5 644.5,254.5"/>
<polygon points="645.5,254.5 645.5,254.5 646.5,254.5 646.5,254.5"/>
<polygon points="647.5,254.5 647.5,254.5 648.5,254.5 648.5,254.5"/>
<polygon points="649.5,254.5 649.5,254.5 650.5,254.5 650.5,254.5"/>
<polygon points="651.5,254.5 651.5,254.5 652.5,254.5 652.5,254.5"/>
<polygon points="653.5,254.5 653.5,254.5 654.5,254.5 654.5,254.5"/>
<polygon points="655.5,254.5 655.5,254.5 656.5,254.5 656.5,254.5"/>
<polygon points="657.5,254.5 657.5,254.5 658.5,254.5 658.5,254.5"/>
<polygon points="659.5,254.5 659.5,254.5 660.5,254.5 660.5,254.5"/>
<polygon points="661.5,254.5 661.5,254.5 662.5,254.5 662.5,254.5"/>
<polygon points="663.5,254.5 663.5,254.5 664.5,254.5 664.5,254.5"/>
<polygon points="665.5,254.5 665.5,254.5 666.5,254.5 666.5,254.5"/>
<polygon points="667.5,254.5 667.5,254.3 698.5,244.3 728.5,234.2 728.5,254.5"/>
<polygon points="500.5,254.5 500.5,254.5 501.5,254.5 501.5,254.5"/>
<polygon points="502.5,254.5 502.5,254.5 503.5,254.5 503.5,254.5"/>
<polygon points="504.5,254.5 504.5,254.5 505.5,254.5 505.5,254.5"/>
<polygon points="506.5,254.5 506.5,254.5 507.5,254.5 507.5,254.5"/>
<polygon points="508.5,254.5 508.5,254.5 509.5,254.5 509.5,254.5"/>
<polygon points="510.5,254.5 510.5,254.5 511.5,254.5 511.5,254.5"/>
<polygon points="512.5,254.5 512.5,254.5 513.5,254.5 513.5,254.5"/>
<polygon points="514.5,254.5 514.5,254.5 515.5,254.5 515.5,254.5"/>
<polygon points="516.5,254.5 516.5,254.5 517.5,254.5 517.5,254.5"/>
<polygon points="518.5,254.5 518.5,254.5 519.5,254.5 519.5,254.5"/>
<polygon points="520.5,254.5 520.5,254.5 521.5,254.5 521.5,254.5"/>
<polygon points="522.5,254.5 522.5,254.5 535.5,257.8 554.5,259.5 571.5,261.5 596.5,262.5 616.5,262.5 643.5,261.2 684.5,256.6 698.5,254.5 698.5,254.5"/>
<polygon points="699.5,254.5 699.5,254.5 700.5,254.5 700.5,254.5"/>
<polygon points="701.5,254.5 701.5,254.5 702.5,254.5 702.5,254.5"/>
<polygon points="703.5,254.5 703.5,254.5 704.5,254.5 704.5,254.5"/>
<polygon points="705.5,254.5 705.5,254.5 706.5,254.5 706.5,254.5"/>
<polygon points="707.5,254.5 707.5,254.5 708.5,254.5 708.5,254.5"/>
<polygon points="709.5,254.5 709.5,254.5 710.5,254.5 710.5,254.5"/>
<polygon points="711.5,254.5 711.5,254.5 712.5,254.5 712.5,254.5"/>
<polygon points="713.5,254.5 713.5,254.5 714.5,254.5 714.5,254.5"/>
<polygon points="715.5,254.5 715.5,254.5 716.5,254.5 716.5,254.5"/>
<polygon points="717.5,254.5 717.5,254.5 718.5,254.5 718.5,254.5"/>
<polygon points="719.5,254.5 719.5,254.5 720.5,254.5 720.5,254.5"/>
<polygon points="721.5,254.5 721.5,254.5 722.5,254.5 722.5,254.5"/>
<polygon points="723.5,254.5 723.5,254.5 724.5,254.5 724.5,254.5"/>
<polygon points="725.5,254.5 725.5,254.5 726.5,254.5 726.5,254.5"/>
<polygon points="727.5,254.5 727.5,254.5 728.5,254.5 728.5,254.5"/>
<polygon points="728.5,254.5 728.5,234.3 767.5,245.9 798.5,254.5 798.5,254.5"/>
<polygon points="799.5,254.5 799.5,254.5 800.5,254.5 800.5,254.5"/>
<polygon points="801.5,254.5 801.5,254.5 802.5,254.5 802.5,254.5"/>
<polygon points="803.5,254.5 803.5,254.5 804.5,254.5 804.5,254.5"/>
<polygon points="805.5,254.5 805.5,254.5 806.5,254.5 806.5,254.5"/>
<polygon points="807.5,254.5 807.5,254.5 808.5,254.5 808.5,254.5"/>
<polygon points="809.5,254.5 809.5,254.5 810.5,254.5 810.5,254.5"/>
<polygon points="811.5,254.5 811.5,254.5 812.5,254.5 812.5,254.5"/>
<polygon points="813.5,254.5 813.5,254.5 814.5,254.5 814.5,254.5"/>
<polygon points="815.5,254.5 815.5,254.5 816.5,254.5 816.5,254.5"/>
<polygon points="817.5,254.5 817.5,254.5 818.5,254.5 818.5,254.5"/>
<polygon points="819.5,254.5 819.5,254.5 820.5,254.5 820.5,254.5"/>
<polygon points="821.5,254.5 821.5,254.5 822.5,254.5 822.5,254.5"/>
<polygon points="823.5,254.5 823.5,254.5 824.5,254.5 824.5,254.5"/>
<polygon points="825.5,254.5 825.5,254.5 826.5,254.5 826.5,254.5"/>
<polygon points="827.5,254.5 827.5,254.5 828.5,254.5 828.5,254.5"/>
<polygon points="829.5,254.5 829.5,254.5 830.5,254.5 830.5,254.5"/>
<polygon points="831.5,254.5 831.5,254.5 832.5,254.5 832.5,254.5"/>
<polygon points="833.5,254.5 833.5,254.5 834.5,254.5 834.5,254.5"/>
<polygon points="835.5,254.5 835.5,254.5 836.5,254.5 836.5,254.5"/>
<polygon points="837.5,254.5 837.5,254.5 838.5,254.5 838.5,254.5"/>
<polygon points="839.5,254.5 839.5,254.5 840.5,254.5 840.5,254.5"/>
<polygon points="841.5,254.5 841.5,254.5 842.5,254.5 842.5,254.5"/>
<polygon points="843.5,254.5 843.5,254.5 844.5,254.5 844.5,254.5"/>
<polygon points="845.5,254.5 845.5,254.5 846.5,254.5 846.5,254.5"/>
<polygon points="847.5,254.5 847.5,254.5 848.5,254.5 848.5,254.5"/>
<polygon points="849.5,254.5 849.5,254.5 850.5,254.5 850.5,254.5"/>
<polygon points="851.5,254.5 851.5,254.5 852.5,254.5 852.5,254.5"/>
<polygon points="853.5,254.5 853.5,254.5 854.5,254.5 854.5,254.5"/>
<polygon points="855.5,254.5 855.5,254.5 856.5,254.5 856.5,254.5"/>
<polygon points="857.5,254.5 857.5,254.5 858.5,254.5 858.5,254.5"/>
<polygon points="859.5,254.5 859.5,254.5 860.5,254.5 860.5,254.5"/>
<polygon points="861.5,254.5 861.5,254.5 862.5,254.5 862.5,254.5"/>
<polygon points="863.5,254.5 863.5,254.5 864.5,254.5 864.5,254.5"/>
<polygon points="865.5,254.5 865.5,254.5 866.5,254.5 866.5,254.5"/>
<polygon points="867.5,254.5 867.5,254.5 868.5,254.5 868.5,254.5"/>
<polygon points="869.5,254.5 869.5,254.5 870.5,254.5 870.5,254.5"/>
<polygon points="871.5,254.5 871.5,254.5 872.5,254.5 872.5,254.5"/>
<polygon points="873.5,254.5 873.5,254.5 874.5,254.5 874.5,254.5"/>
<polygon points="875.5,254.5 875.5,254.5 876.5,254.5 876.5,254.5"/>
<polygon points="877.5,254.5 877.5,254.5 878.5,254.5 878.5,254.5"/>
<polygon points="879.5,254.5 879.5,254.5 880.5,254.5 880.5,254.5"/>
<polygon points="881.5,254.5 881.5,254.5 882.5,254.5 882.5,254.5"/>
<polygon points="883.5,254.5 883.5,254.5 884.5,254.5 884.5,254.5"/>
<polygon points="885.5,254.5 885.5,254.5 886.5,254.5 886.5,254.5"/>
<polygon points="887.5,254.5 887.5,254.3 921.5,244.6 956.5,234 956.5,254.5"/>
<polygon points="728.5,254.5 728.5,254.5 729.5,254.5 729.5,254.5"/>
<polygon points="730.5,254.5 730.5,254.5 731.5,254.5 731.5,254.5"/>
<polygon points="732.5,254.5 732.5,254.5 733.5,254.5 733.5,254.5"/>
<polygon points="734.5,254.5 734.5,254.5 735.5,254.5 735.5,254.5"/>
<polygon points="736.5,254.5 736.5,254.5 737.5,254.5 737.5,254.5"/>
<polygon points="738.5,254.5 738.5,254.5 739.5,254.5 739.5,254.5"/>
<polygon points="740.5,254.5 740.5,254.5 741.5,254.5 741.5,254.5"/>
<polygon points="742.5,254.5 742.5,254.5 743.5,254.5 743.5,254.5"/>
<polygon points="744.5,254.5 744.5,254.5 745.5,254.5 745.5,254.5"/>
<polygon points="746.5,254.5 746.5,254.5 747.5,254.5 747.5,254.5"/>
<polygon points="748.5,254.5 748.5,254.5 749.5,254.5 749.5,254.5"/>
<polygon points="750.5,254.5 750.5,254.5 751.5,254.5 751.5,254.5"/>
<polygon points="752.5,254.5 752.5,254.5 753.5,254.5 753.5,254.5"/>
<polygon points="754.5,254.5 754.5,254.5 755.5,254.5 755.5,254.5"/>
<polygon points="756.5,254.5 756.5,254.5 757.5,254.5 757.5,254.5"/>
<polygon points="758.5,254.5 758.5,254.5 789.5,258 803.5,260.1 824.5,261.4 851.5,261.4 871.5,260.1 905.5,257.3 926.5,254.5 926.5,254.5"/>
<polygon points="927.5,254.5 927.5,254.5 928.5,254.5 928.5,254.5"/>
<polygon points="929.5,254.5 929.5,254.5 930.5,254.5 930.5,254.5"/>
<polygon points="931.5,254.5 931.5,254.5 932.5,254.5 932.5,254.5"/>
<polygon points="933.5,254.5 933.5,254.5 934.5,254.5 934.5,254.5"/>
<polygon points="935.5,254.5 935.5,254.5 936.5,254.5 936.5,254.5"/>
<polygon points="937.5,254.5 937.5,254.5 938.5,254.5 938.5,254.5"/>
<polygon points="939.5,254.5 939.5,254.5 940.5,254.5 940.5,254.5"/>
<polygon points="941.5,254.5 941.5,254.5 942.5,254.5 942.5,254.5"/>
<polygon points="943.5,254.5 943.5,254.5 944.5,254.5 944.5,254.5"/>
<polygon points="945.5,254.5 945.5,254.5 946.5,254.5 946.5,254.5"/>
<polygon points="947.5,254.5 947.5,254.5 948.5,254.5 948.5,254.5"/>
<polygon points="949.5,254.5 949.5,254.5 950.5,254.5 950.5,254.5"/>
<polygon points="951.5,254.5 951.5,254.5 952.5,254.5 952.5,254.5"/>
<polygon points="953.5,254.5 953.5,254.5 954.5,254.5 954.5,254.5"/>
<polygon points="955.5,254.5 955.5,254.5 956.5,254.5 956.5,254.5"/>
<polygon points="956.5,254.5 956.5,234 995.5,245.7 1026.5,254.5 1026.5,254.5"/>
<polygon points="1027.5,254.5 1027.5,254.5 1028.5,254.5 1028.5,254.5"/>
<polygon points="1029.5,254.5 1029.5,254.5 1030.5,254.5 1030.5,254.5"/>
<polygon points="1031.5,254.5 1031.5,254.5 1032.5,254.5 1032.5,254.5"/>
<polygon points="1033.5,254.5 1033.5,254.5 1034.5,254.5 1034.5,254.5"/>
<polygon points="1035.5,254.5 1035.5,254.5 1036.5,254.5 1036.5,254.5"/>
<polygon points="1037.5,254.5 1037.5,254.5 1038.5,254.5 1038.5,254.5"/>
<polygon points="1039.5,254.5 1039.5,254.5 1040.5,254.5 1040.5,254.5"/>
<polygon points="1041.5,254.5 1041.5,254.5 1042.5,254.5 1042.5,254.5"/>
<polygon points="1043.5,254.5 1043.5,254.5 1044.5,254.5 1044.5,254.5"/>
<polygon points="1045.5,254.5 1045.5,254.5 1046.5,254.5 1046.5,254.5"/>
<polygon points="1047.5,254.5 1047.5,254.5 1048.5,254.5 1048.5,254.5"/>
<polygon points="1049.5,254.5 1049.5,254.5 1050.5,254.5 1050.5,254.5"/>
<polygon points="1051.5,254.5 1051.5,254.5 1052.5,254.5 1052.5,254.5"/>
<polygon points="1053.5,254.5 1053.5,254.5 1054.5,254.5 1054.5,254.5"/>
<polygon points="1055.5,254.5 1055.5,254.5 1056.5,254.5 1056.5,254.5"/>
<polygon points="1057.5,254.5 1057.5,254.5 1058.5,254.5 1058.5,254.5"/>
<polygon points="1059.5,254.5 1059.5,254.5 1060.5,254.5 1060.5,254.5"/>
<polygon points="1061.5,254.5 1061.5,254.5 1062.5,254.5 1062.5,254.5"/>
<polygon points="1063.5,254.5 1063.5,254.5 1064.5,254.5 1064.5,254.5"/>
<polygon points="1065.5,254.5 1065.5,254.5 1066.5,254.5 1066.5,254.5"/>
<polygon points="1067.5,254.5 1067.5,254.5 1068.5,254.5 1068.5,254.5"/>
<polygon points="1069.5,254.5 1069.5,254.5 1070.5,254.5 1070.5,254.5"/>
<polygon points="1071.5,254.5 1071.5,254.5 1072.5,254.5 1072.5,254.5"/>
<polygon points="1073.5,254.5 1073.5,254.5 1074.5,254.5 1074.5,254.5"/>
<polygon points="1075.5,254.5 1075.5,254.5 1076.5,254.5 1076.5,254.5"/>
<polygon points="1077.5,254.5 1077.5,254.5 1078.5,254.5 1078.5,254.5"/>
<polygon points="1079.5,254.5 1079.5,254.5 1080.5,254.5 1080.5,254.5"/>
<polygon points="1081.5,254.5 1081.5,254.5 1082.5,254.5 1082.5,254.5"/>
<polygon points="1083.5,254.5 1083.5,254.5 1084.5,254.5 1084.5,254.5"/>
<polygon points="1085.5,254.5 1085.5,254.5 1086.5,254.5 1086.5,254.5"/>
<polygon points="1087.5,254.5 1087.5,254.5 1088.5,254.5 1088.5,254.5"/>
<polygon points="1089.5,254.5 1089.5,254.5 1090.5,254.5 1090.5,254.5"/>
<polygon points="1091.5,254.5 1091.5,254.5 1092.5,254.5 1092.5,254.5"/>
<polygon points="1093.5,254.5 1093.5,254.5 1094.5,254.5 1094.5,254.5"/>
<polygon points="1095.5,254.5 1095.5,254.5 1096.5,254.5 1096.5,254.5"/>
<polygon points="1097.5,254.5 1097.5,254.5 1098.5,254.5 1098.5,254.5"/>
<polygon points="1099.5,254.5 1099.5,254.5 1100.5,254.5 1100.5,254.5"/>
<polygon points="1101.5,254.5 1101.5,254.5 1102.5,254.5 1102.5,254.5"/>
<polygon points="1103.5,254.5 1103.5,254.5 1104.5,254.5 1104.5,254.5"/>
<polygon points="1105.5,254.5 1105.5,254.5 1106.5,254.5 1106.5,254.5"/>
<polygon points="1107.5,254.5 1107.5,254.5 1108.5,254.5 1108.5,254.5"/>
<polygon points="1109.5,254.5 1109.5,254.5 1110.5,254.5 1110.5,254.5"/>
<polygon points="1111.5,254.5 1111.5,254.5 1112.5,254.5 1112.5,254.5"/>
<polygon points="1113.5,254.5 1113.5,254.5 1114.5,254.5 1114.5,254.5"/>
<polygon points="1115.5,254.5 1115.5,254.4 1150.5,244.4 1184.5,234.3 1184.5,254.5"/>
<polygon points="956.5,254.5 956.5,254.5 957.5,254.5 957.5,254.5"/>
<polygon points="958.5,254.5 958.5,254.5 959.5,254.5 959.5,254.5"/>
<polygon points="960.5,254.5 960.5,254.5 961.5,254.5 961.5,254.5"/>
<polygon points="962.5,254.5 962.5,254.5 963.5,254.5 963.5,254.5"/>
<polygon points="964.5,254.5 964.5,254.5 965.5,254.5 965.5,254.5"/>
<polygon points="966.5,254.5 966.5,254.5 967.5,254.5 967.5,254.5"/>
<polygon points="968.5,254.5 968.5,254.5 969.5,254.5 969.5,254.5"/>
<polygon points="970.5,254.5 970.5,254.5 971.5,254.5 971.5,254.5"/>
<polygon points="972.5,254.5 972.5,254.5 973.5,254.5 973.5,254.5"/>
<polygon points="974.5,254.5 974.5,254.5 975.5,254.5 975.5,254.5"/>
<polygon points="976.5,254.5 976.5,254.5 977.5,254.5 977.5,254.5"/>
<polygon points="978.5,254.5 978.5,254.5 979.5,254.5 979.5,254.5"/>
<polygon points="980.5,254.5 980.5,254.5 981.5,254.5 981.5,254.5"/>
<polygon points="982.5,254.5 982.5,254.5 983.5,254.5 983.5,254.5"/>
<polygon points="984.5,254.5 984.5,254.5 985.5,254.5 985.5,254.5"/>
<polygon points="986.5,254.5 986.5,254.5 1007.5,257.3 1041.5,260.1 1062.5,261.4 1089.5,261.4 1109.5,260.1 1123.5,258 1154.5,254.5 1154.5,254.5"/>
<polygon points="1155.5,254.5 1155.5,254.5 1156.5,254.5 1156.5,254.5"/>
<polygon points="1157.5,254.5 1157.5,254.5 1158.5,254.5 1158.5,254.5"/>
<polygon points="1159.5,254.5 1159.5,254.5 1160.5,254.5 1160.5,254.5"/>
<polygon points="1161.5,254.5 1161.5,254.5 1162.5,254.5 1162.5,254.5"/>
<polygon points="1163.5,254.5 1163.5,254.5 1164.5,254.5 1164.5,254.5"/>
<polygon points="1165.5,254.5 1165.5,254.5 1166.5,254.5 1166.5,254.5"/>
<polygon points="1167.5,254.5 1167.5,254.5 1168.5,254.5 1168.5,254.5"/>
<polygon points="1169.5,254.5 1169.5,254.5 1170.5,254.5 1170.5,254.5"/>
<polygon points="1171.5,254.5 1171.5,254.5 1172.5,254.5 1172.5,254.5"/>
<polygon points="1173.5,254.5 1173.5,254.5 1174.5,254.5 1174.5,254.5"/>
<polygon points="1175.5,254.5 1175.5,254.5 1176.5,254.5 1176.5,254.5"/>
<polygon points="1177.5,254.5 1177.5,254.5 1178.5,254.5 1178.5,254.5"/>
<polygon points="1179.5,254.5 1179.5,254.5 1180.5,254.5 1180.5,254.5"/>
<polygon points="1181.5,254.5 1181.5,254.5 1182.5,254.5 1182.5,254.5"/>
<polygon points="1183.5,254.5 1183.5,254.5 1184.5,254.5 1184.5,254.5"/>
<polygon points="1184.5,254.5 1184.5,234.2 1219.5,246 1246.5,254.5 1246.5,254.5"/>
<polygon points="1247.5,254.5 1247.5,254.5 1248.5,254.5 1248.5,254.5"/>
<polygon points="1249.5,254.5 1249.5,254.5 1250.5,254.5 1250.5,254.5"/>
<polygon points="1251.5,254.5 1251.5,254.5 1252.5,254.5 1252.5,254.5"/>
<polygon points="1253.5,254.5 1253.5,254.5 1254.5,254.5 1254.5,254.5"/>
<polygon points="1255.5,254.5 1255.5,254.5 1256.5,254.5 1256.5,254.5"/>
<polygon points="1257.5,254.5 1257.5,254.5 1258.5,254.5 1258.5,254.5"/>
<polygon points="1259.5,254.5 1259.5,254.5 1260.5,254.5 1260.5,254.5"/>
<polygon points="1261.5,254.5 1261.5,254.5 1262.5,254.5 1262.5,254.5"/>
<polygon points="1263.5,254.5 1263.5,254.5 1264.5,254.5 1264.5,254.5"/>
<polygon points="1265.5,254.5 1265.5,254.5 1266.5,254.5 1266.5,254.5"/>
<polygon points="1267.5,254.5 1267.5,254.5 1268.5,254.5 1268.5,254.5"/>
<polygon points="1269.5,254.5 1269.5,254.5 1270.5,254.5 1270.5,254.5"/>
<polygon points="1271.5,254.5 1271.5,254.5 1272.5,254.5 1272.5,254.5"/>
<polygon points="1273.5,254.5 1273.5,254.5 1274.5,254.5 1274.5,254.5"/>
<polygon points="1275.5,254.5 1275.5,254.5 1276.5,254.5 1276.5,254.5"/>
<polygon points="1277.5,254.5 1277.5,254.5 1278.5,254.5 1278.5,254.5"/>
<polygon points="1279.5,254.5 1279.5,254.5 1280.5,254.5 1280.5,254.5"/>
<polygon points="1281.5,254.5 1281.5,254.5 1282.5,254.5 1282.5,254.5"/>
<polygon points="1283.5,254.5 1283.5,254.5 1284.5,254.5 1284.5,254.5"/>
<polygon points="1285.5,254.5 1285.5,254.5 1286.5,254.5 1286.5,254.5"/>
<polygon points="1287.5,254.5 1287.5,254.5 1288.5,254.5 1288.5,254.5"/>
<polygon points="1289.5,254.5 1289.5,254.5 1290.5,254.5 1290.5,254.5"/>
<polygon points="1291.5,254.5 1291.5,254.5 1292.5,254.5 1292.5,254.5"/>
<polygon points="1293.5,254.5 1293.5,254.5 1294.5,254.5 1294.5,254.5"/>
<polygon points="1295.5,254.5 1295.5,254.5 1296.5,254.5 1296.5,254.5"/>
<polygon points="1297.5,254.5 1297.5,254.5 1298.5,254.5 1298.5,254.5"/>
<polygon points="1299.5,254.5 1299.5,254.5 1300.5,254.5 1300.5,254.5"/>
<polygon points="1301.5,254.5 1301.5,254.5 1302.5,254.5 1302.5,254.5"/>
<polygon points="1303.5,254.5 1303.5,254.5 1304.5,254.5 1304.5,254.5"/>
<polygon points="1305.5,254.5 1305.5,254.5 1306.5,254.5 1306.5,254.5"/>
<polygon points="1307.5,254.5 1307.5,254.5 1308.5,254.5 1308.5,254.5"/>
<polygon points="1309.5,254.5 1309.5,254.5 1310.5,254.5 1310.5,254.5"/>
<polygon points="1311.5,254.5 1311.5,254.5 1312.5,254.5 1312.5,254.5"/>
<polygon points="1313.5,254.5 1313.5,254.5 1314.5,254.5 1314.5,254.5"/>
<polygon points="1315.5,254.5 1315.5,254.5 1316.5,254.5 1316.5,254.5"/>
<polygon points="1317.5,254.5 1317.5,254.5 1318.5,254.5 1318.5,254.5"/>
<polygon points="1319.5,254.5 1319.5,254.5 1320.5,254.5 1320.5,254.5"/>
<polygon points="1321.5,254.5 1321.5,254.5 1322.5,254.5 1322.5,254.5"/>
<polygon points="1323.5,254.5 1323.5,254.5 1324.5,254.5 1324.5,254.5"/>
<polygon points="1325.5,254.5 1325.5,254.5 1326.5,254.5 1326.5,254.5"/>
<polygon points="1327.5,254.5 1327.5,254.5 1328.5,254.5 1328.5,254.5"/>
<polygon points="1329.5,254.5 1329.5,254.5 1330.5,254.5 1330.5,254.5"/>
<polygon points="1331.5,254.5 1331.5,254.5 1332.5,254.5 1332.5,254.5"/>
<polygon points="1333.5,254.5 1333.5,254.5 1334.5,254.5 1334.5,254.5"/>
<polygon points="1335.5,254.5 1335.5,254.5 1336.5,254.5 1336.5,254.5"/>
<polygon points="1337.5,254.5 1337.5,254.5 1338.5,254.5 1338.5,254.5"/>
<polygon points="1339.5,254.5 1339.5,254.5 1340.5,254.5 1340.5,254.5"/>
<polygon points="1341.5,254.5 1341.5,254.5 1342.5,254.5 1342.5,254.5"/>
<polygon points="1343.5,254.5 1343.5,254.5 1344.5,254.5 1344.5,254.5"/>
<polygon points="1345.5,254.5 1345.5,254.5 1346.5,254.5 1346.5,254.5"/>
<polygon points="1347.5,254.5 1347.5,254.5 1348.5,254.5 1348.5,254.5"/>
<polygon points="1349.5,254.5 1349.5,254.5 1350.5,254.5 1350.5,254.5"/>
<polygon points="1351.5,254.5 1351.5,254.3 1381.5,246.1 1412.5,237.1 1412.5,254.5"/>
<polygon points="1184.5,254.5 1184.5,254.5 1185.5,254.5 1185.5,254.5"/>
<polygon points="1186.5,254.5 1186.5,254.5 1187.5,254.5 1187.5,254.5"/>
<polygon points="1188.5,254.5 1188.5,254.5 1189.5,254.5 1189.5,254.5"/>
<polygon points="1190.5,254.5 1190.5,254.5 1191.5,254.5 1191.5,254.5"/>
<polygon points="1192.5,254.5 1192.5,254.5 1193.5,254.5 1193.5,254.5"/>
<polygon points="1194.5,254.5 1194.5,254.5 1195.5,254.5 1195.5,254.5"/>
<polygon points="1196.5,254.5 1196.5,254.5 1197.5,254.5 1197.5,254.5"/>
<polygon points="1198.5,254.5 1198.5,254.5 1199.5,254.5 1199.5,254.5"/>
<polygon points="1200.5,254.5 1200.5,254.5 1201.5,254.5 1201.5,254.5"/>
<polygon points="1202.5,254.5 1202.5,254.5 1203.5,254.5 1203.5,254.5"/>
<polygon points="1204.5,254.5 1204.5,254.5 1205.5,254.5 1205.5,254.5"/>
<polygon points="1206.5,254.5 1206.5,254.5 1207.5,254.5 1207.5,254.5"/>
<polygon points="1208.5,254.5 1208.5,254.5 1209.5,254.5 1209.5,254.5"/>
<polygon points="1210.5,254.5 1210.5,254.5 1211.5,254.5 1211.5,254.5"/>
<polygon points="1212.5,254.5 1212.5,254.5 1213.5,254.5 1213.5,254.5"/>
<polygon points="1214.5,254.5 1214.5,254.5 1228.5,256.6 1269.5,261.2 1297.5,262.5 1317.5,262.5 1341.5,261.5 1358.5,259.5 1377.5,257.8 1390.5,254.5 1390.5,254.5"/>
<polygon points="1391.5,254.5 1391.5,254.5 1392.5,254.5 1392.5,254.5"/>
<polygon points="1393.5,254.5 1393.5,254.5 1394.5,254.5 1394.5,254.5"/>
<polygon points="1395.5,254.5 1395.5,254.5 1396.5,254.5 1396.5,254.5"/>
<polygon points="1397.5,254.5 1397.5,254.5 1398.5,254.5 1398.5,254.5"/>
<polygon points="1399.5,254.5 1399.5,254.5 1400.5,254.5 1400.5,254.5"/>
<polygon points="1401.5,254.5 1401.5,254.5 1402.5,254.5 1402.5,254.5"/>
<polygon points="1403.5,254.5 1403.5,254.5 1404.5,254.5 1404.5,254.5"/>
<polygon points="1405.5,254.5 1405.5,254.5 1406.5,254.5 1406.5,254.5"/>
<polygon points="1407.5,254.5 1407.5,254.5 1408.5,254.5 1408.5,254.5"/>
<polygon points="1409.5,254.5 1409.5,254.5 1410.5,254.5 1410.5,254.5"/>
<polygon points="1411.5,254.5 1411.5,254.5 1412.5,254.5 1412.5,254.5"/>
</g>
<path d="M509.5 688.5V645.6M509.5 688.5V713.4M518.5 688.5V651.9M518.5 688.5V712.5M526.5 688.5V657.7M526.5 688.5V711.6M535.5 688.5V663.5M535.5 688.5V710.7M544.5 688.5V667.3M544.5 688.5V710.1M553.5 688.5V671M553.5 688.5V709.8M561.5 688.5V674.5M561.5 688.5V709.5M570.5 688.5V677.9M570.5 688.5V709.2M579.5 688.5V680.6M579.5 688.5V708.4M588.5 688.5V683.3M588.5 688.5V706.6M596.5 688.5V686.3M596.5 688.5V704.8M605.5 688.5V703M614.5 688.5V701.2M623.5 688.5V699.4M632.5 688.5V700.5M640.5 688.5V686.4M640.5 688.5V701.5M649.5 688.5V683.2M649.5 688.5V702.2M658.5 688.5V680.3M658.5 688.5V702.4M667.5 688.5V677.3M667.5 688.5V702.6M675.5 688.5V672.5M675.5 688.5V702.8M684.5 688.5V667.7M684.5 688.5V703.6M693.5 688.5V662.6M693.5 688.5V704.7M702.5 688.5V657.4M702.5 688.5V705.8M710.5 688.5V650.3M710.5 688.5V706.4M719.5 688.5V643.6M719.5 688.5V706.8M737.5 688.5V647.9M737.5 688.5V704.5M746.5 688.5V653.7M746.5 688.5V704.2M754.5 688.5V659.2M754.5 688.5V703.4M763.5 688.5V664.6M763.5 688.5V702.5M772.5 688.5V669.5M772.5 688.5V701.7M781.5 688.5V674.3M781.5 688.5V701.6M789.5 688.5V677.5M789.5 688.5V701.8M798.5 688.5V680.5M798.5 688.5V702.1M807.5 688.5V683.2M807.5 688.5V701.3M816.5 688.5V685.8M816.5 688.5V700.5M824.5 688.5V699.6M833.5 688.5V698.8M842.5 688.5V698.1M851.5 688.5V699.7M860.5 688.5V701.2M868.5 688.5V685.4M868.5 688.5V702.2M877.5 688.5V682.6M877.5 688.5V702.3M886.5 688.5V679.7M886.5 688.5V702.5M895.5 688.5V676.2M895.5 688.5V702.6M903.5 688.5V672.6M903.5 688.5V702.8M912.5 688.5V669M912.5 688.5V703.3M921.5 688.5V664.6M921.5 688.5V704M930.5 688.5V660.3M930.5 688.5V704.7M938.5 688.5V653.4M938.5 688.5V705.4M947.5 688.5V648.4M947.5 688.5V705.9M965.5 688.5V648.4M965.5 688.5V705.9M974.5 688.5V653.4M974.5 688.5V705.4M982.5 688.5V660.3M982.5 688.5V704.7M991.5 688.5V664.6M991.5 688.5V704M1000.5 688.5V669M1000.5 688.5V703.3M1009.5 688.5V672.6M1009.5 688.5V702.8M1017.5 688.5V676.2M1017.5 688.5V702.6M1026.5 688.5V679.7M1026.5 688.5V702.5M1035.5 688.5V682.6M1035.5 688.5V702.3M1044.5 688.5V685.4M1044.5 688.5V702.2M1052.5 688.5V701.2M1061.5 688.5V699.7M1070.5 688.5V698.1M1079.5 688.5V698.8M1088.5 688.5V699.6M1096.5 688.5V685.8M1096.5 688.5V700.5M1105.5 688.5V683.2M1105.5 688.5V701.3M1114.5 688.5V680.5M1114.5 688.5V702.1M1123.5 688.5V677.5M1123.5 688.5V701.8M1131.5 688.5V674.3M1131.5 688.5V701.6M1140.5 688.5V669.5M1140.5 688.5V701.7M1149.5 688.5V664.6M1149.5 688.5V702.5M1158.5 688.5V659.2M1158.5 688.5V703.4M1166.5 688.5V653.7M1166.5 688.5V704.2M1175.5 688.5V647.9M1175.5 688.5V704.5M1193.5 688.5V643.6M1193.5 688.5V706.8M1202.5 688.5V650.3M1202.5 688.5V706.4M1210.5 688.5V657.4M1210.5 688.5V705.8M1219.5 688.5V662.6M1219.5 688.5V704.7M1228.5 688.5V667.7M1228.5 688.5V703.6M1237.5 688.5V672.5M1237.5 688.5V702.8M1245.5 688.5V677.3M1245.5 688.5V702.6M1254.5 688.5V680.3M1254.5 688.5V702.4M1263.5 688.5V683.2M1263.5 688.5V702.2M1272.5 688.5V686.4M1272.5 688.5V701.5M1280.5 688.5V700.5M1289.5 688.5V699.4M1298.5 688.5V701.2M1307.5 688.5V703M1316.5 688.5V686.3M1316.5 688.5V704.8M1324.5 688.5V683.3M1324.5 688.5V706.6M1333.5 688.5V680.6M1333.5 688.5V708.4M1342.5 688.5V677.9M1342.5 688.5V709.2M1351.5 688.5V674.5M1351.5 688.5V709.5M1359.5 688.5V671M1359.5 688.5V709.8M1368.5 688.5V667.3M1368.5 688.5V710.1M1377.5 688.5V663.5M1377.5 688.5V710.7M1386.5 688.5V657.7M1386.5 688.5V711.6M1394.5 688.5V651.9M1394.5 688.5V712.5M1403.5 688.5V645.6M1403.5 688.5V713.4M509.5 574.5V533.6M509.5 574.5V594.3M518.5 574.5V539.3M518.5 574.5V593.8M526.5 574.5V544.9M526.5 574.5V593.2M535.5 574.5V550.6M535.5 574.5V592.7M544.5 574.5V555.3M544.5 574.5V592.2M553.5 574.5V559.9M553.5 574.5V591.7M561.5 574.5V562.8M561.5 574.5V591.2M570.5 574.5V565.8M570.5 574.5V590.6M579.5 574.5V568.3M579.5 574.5V590.1M588.5 574.5V570.8M588.5 574.5V589.6M596.5 574.5V573.2M596.5 574.5V589.1M605.5 574.5V587.7M614.5 574.5V586.2M623.5 574.5V585.8M632.5 574.5V586.6M640.5 574.5V587.5M649.5 574.5V570.8M649.5 574.5V587.8M658.5 574.5V567.9M658.5 574.5V587.7M667.5 574.5V564.1M667.5 574.5V587.6M675.5 574.5V560.4M675.5 574.5V587.5M684.5 574.5V555.8M684.5 574.5V587.9M693.5 574.5V551.2M693.5 574.5V588.5M702.5 574.5V545.7M702.5 574.5V589.1M710.5 574.5V540.2M710.5 574.5V589.7M719.5 574.5V534M719.5 574.5V590.3M737.5 574.5V535.7M737.5 574.5V589.6M746.5 574.5V541.6M746.5 574.5V589.1M754.5 574.5V547.3M754.5 574.5V588.5M763.5 574.5V553M763.5 574.5V587.8M772.5 574.5V557.2M772.5 574.5V587.5M781.5 574.5V561.5M781.5 574.5V587.5M789.5 574.5V564.6M789.5 574.5V587.5M798.5 574.5V567.6M798.5 574.5V587.5M807.5 574.5V569.8M807.5 574.5V587.5M816.5 574.5V572M816.5 574.5V587.5M824.5 574.5V586.7M833.5 574.5V585.3M842.5 574.5V584.4M851.5 574.5V585.4M860.5 574.5V586.4M868.5 574.5V572.3M868.5 574.5V587.1M877.5 574.5V569.4M877.5 574.5V587.2M886.5 574.5V566.8M886.5 574.5V587.3M895.5 574.5V564.1M895.5 574.5V587.4M903.5 574.5V560.6M903.5 574.5V587.4M912.5 574.5V557M912.5 574.5V587.7M921.5 574.5V551.8M921.5 574.5V588.5M930.5 574.5V546.6M930.5 574.5V589.3M938.5 574.5V540.8M938.5 574.5V589.6M947.5 574.5V535M947.5 574.5V589.9M965.5 574.5V535M965.5 574.5V589.9M974.5 574.5V540.8M974.5 574.5V589.6M982.5 574.5V546.6M982.5 574.5V589.3M991.5 574.5V551.8M991.5 574.5V588.5M1000.5 574.5V557M1000.5 574.5V587.7M1009.5 574.5V560.6M1009.5 574.5V587.4M1017.5 574.5V564.1M1017.5 574.5V587.4M1026.5 574.5V566.8M1026.5 574.5V587.3M1035.5 574.5V569.4M1035.5 574.5V587.2M1044.5 574.5V572.3M1044.5 574.5V587.1M1052.5 574.5V586.4M1061.5 574.5V585.4M1070.5 574.5V584.4M1079.5 574.5V585.3M1088.5 574.5V586.7M1096.5 574.5V572M1096.5 574.5V587.5M1105.5 574.5V569.8M1105.5 574.5V587.5M1114.5 574.5V567.6M1114.5 574.5V587.5M1123.5 574.5V564.6M1123.5 574.5V587.5M1131.5 574.5V561.5M1131.5 574.5V587.5M1140.5 574.5V557.2M1140.5 574.5V587.5M1149.5 574.5V553M1149.5 574.5V587.8M1158.5 574.5V547.3M1158.5 574.5V588.5M1166.5 574.5V541.6M1166.5 574.5V589.1M1175.5 574.5V535.7M1175.5 574.5V589.6M1193.5 574.5V534M1193.5 574.5V590.3M1202.5 574.5V540.2M1202.5 574.5V589.7M1210.5 574.5V545.7M1210.5 574.5V589.1M1219.5 574.5V551.2M1219.5 574.5V588.5M1228.5 574.5V555.8M1228.5 574.5V587.9M1237.5 574.5V560.4M1237.5 574.5V587.5M1245.5 574.5V564.1M1245.5 574.5V587.6M1254.5 574.5V567.9M1254.5 574.5V587.7M1263.5 574.5V570.8M1263.5 574.5V587.8M1272.5 574.5V587.5M1280.5 574.5V586.6M1289.5 574.5V585.8M1298.5 574.5V586.2M1307.5 574.5V587.7M1316.5 574.5V573.2M1316.5 574.5V589.1M1324.5 574.5V570.8M1324.5 574.5V589.6M1333.5 574.5V568.3M1333.5 574.5V590.1M1342.5 574.5V565.8M1342.5 574.5V590.6M1351.5 574.5V562.8M1351.5 574.5V591.2M1359.5 574.5V559.9M1359.5 574.5V591.7M1368.5 574.5V555.3M1368.5 574.5V592.2M1377.5 574.5V550.6M1377.5 574.5V592.7M1386.5 574.5V544.9M1386.5 574.5V593.2M1394.5 574.5V539.3M1394.5 574.5V593.8M1403.5 574.5V533.6M1403.5 574.5V594.3M509.5 467.5V432.4M509.5 467.5V479.8M518.5 467.5V437M518.5 467.5V479.8M526.5 467.5V441.3M526.5 467.5V479.8M535.5 467.5V445.5M535.5 467.5V479.8M544.5 467.5V449.4M544.5 467.5V480.2M553.5 467.5V453M553.5 467.5V481M561.5 467.5V456.5M561.5 467.5V481.5M570.5 467.5V459.7M570.5 467.5V481.5M579.5 467.5V462.6M579.5 467.5V481.5M588.5 467.5V465.3M588.5 467.5V481.5M596.5 467.5V481.5M605.5 467.5V480.6M614.5 467.5V479.5M623.5 467.5V479.5M632.5 467.5V479.5M640.5 467.5V479.4M649.5 467.5V464.8M649.5 467.5V479M658.5 467.5V461.9M658.5 467.5V478.7M667.5 467.5V458.6M667.5 467.5V478.4M675.5 467.5V455.1M675.5 467.5V478.3M684.5 467.5V451.2M684.5 467.5V478.4M693.5 467.5V447.1M693.5 467.5V478.5M702.5 467.5V442.8M702.5 467.5V478.6M710.5 467.5V438.1M710.5 467.5V478.7M719.5 467.5V433.2M719.5 467.5V478.6M737.5 467.5V433.9M737.5 467.5V477.5M746.5 467.5V438.6M746.5 467.5V477.4M754.5 467.5V443M754.5 467.5V477.4M763.5 467.5V447.2M763.5 467.5V477.4M772.5 467.5V451.1M772.5 467.5V477.3M781.5 467.5V454.8M781.5 467.5V477.3M789.5 467.5V458.2M789.5 467.5V477.9M798.5 467.5V461.3M798.5 467.5V478.7M807.5 467.5V464.2M807.5 467.5V479M816.5 467.5V478.8M824.5 467.5V478.5M833.5 467.5V478.3M842.5 467.5V478.3M851.5 467.5V478.6M860.5 467.5V478.8M868.5 467.5V479M877.5 467.5V464.3M877.5 467.5V478.8M886.5 467.5V461.4M886.5 467.5V478.3M895.5 467.5V458.2M895.5 467.5V477.9M903.5 467.5V454.7M903.5 467.5V477.4M912.5 467.5V451M912.5 467.5V477.5M921.5 467.5V447M921.5 467.5V477.7M930.5 467.5V442.8M930.5 467.5V477.9M938.5 467.5V438.3M938.5 467.5V478.2M947.5 467.5V433.5M947.5 467.5V478.3M965.5 467.5V433.5M965.5 467.5V478.3M974.5 467.5V438.3M974.5 467.5V478.2M982.5 467.5V442.8M982.5 467.5V477.9M991.5 467.5V447M991.5 467.5V477.7M1000.5 467.5V451M1000.5 467.5V477.5M1009.5 467.5V454.7M1009.5 467.5V477.4M1017.5 467.5V458.2M1017.5 467.5V477.9M1026.5 467.5V461.4M1026.5 467.5V478.3M1035.5 467.5V464.3M1035.5 467.5V478.8M1044.5 467.5V479M1052.5 467.5V478.8M1061.5 467.5V478.6M1070.5 467.5V478.3M1079.5 467.5V478.3M1088.5 467.5V478.5M1096.5 467.5V478.8M1105.5 467.5V464.2M1105.5 467.5V479M1114.5 467.5V461.3M1114.5 467.5V478.7M1123.5 467.5V458.2M1123.5 467.5V477.9M1131.5 467.5V454.8M1131.5 467.5V477.3M1140.5 467.5V451.1M1140.5 467.5V477.3M1149.5 467.5V447.2M1149.5 467.5V477.4M1158.5 467.5V443M1158.5 467.5V477.4M1166.5 467.5V438.6M1166.5 467.5V477.4M1175.5 467.5V433.9M1175.5 467.5V477.5M1193.5 467.5V433.2M1193.5 467.5V478.6M1202.5 467.5V438.1M1202.5 467.5V478.7M1210.5 467.5V442.8M1210.5 467.5V478.6M1219.5 467.5V447.1M1219.5 467.5V478.5M1228.5 467.5V451.2M1228.5 467.5V478.4M1237.5 467.5V455.1M1237.5 467.5V478.3M1245.5 467.5V458.6M1245.5 467.5V478.4M1254.5 467.5V461.9M1254.5 467.5V478.7M1263.5 467.5V464.8M1263.5 467.5V479M1272.5 467.5V479.4M1280.5 467.5V479.5M1289.5 467.5V479.5M1298.5 467.5V479.5M1307.5 467.5V480.6M1316.5 467.5V481.5M1324.5 467.5V465.3M1324.5 467.5V481.5M1333.5 467.5V462.6M1333.5 467.5V481.5M1342.5 467.5V459.7M1342.5 467.5V481.5M1351.5 467.5V456.5M1351.5 467.5V481.5M1359.5 467.5V453M1359.5 467.5V481M1368.5 467.5V449.4M1368.5 467.5V480.2M1377.5 467.5V445.5M1377.5 467.5V479.8M1386.5 467.5V441.3M1386.5 467.5V479.8M1394.5 467.5V437M1394.5 467.5V479.8M1403.5 467.5V432.4M1403.5 467.5V479.8M509.5 361.5V332.5M509.5 361.5V367.6M518.5 361.5V337.1M518.5 361.5V368.5M526.5 361.5V341.3M526.5 361.5V369.1M535.5 361.5V345.3M535.5 361.5V369.5M544.5 361.5V348.8M544.5 361.5V370M553.5 361.5V352M553.5 361.5V370.6M561.5 361.5V354.9M561.5 361.5V371.5M570.5 361.5V357.5M570.5 361.5V372.5M579.5 361.5V359.7M579.5 361.5V373.1M588.5 361.5V373.1M596.5 361.5V373.1M605.5 361.5V373.1M614.5 361.5V372.9M623.5 361.5V372.4M632.5 361.5V372M640.5 361.5V371.5M649.5 361.5V370.8M658.5 361.5V359M658.5 361.5V370.2M667.5 361.5V356.5M667.5 361.5V369.5M675.5 361.5V353.6M675.5 361.5V368.8M684.5 361.5V350.4M684.5 361.5V368.2M693.5 361.5V346.7M693.5 361.5V367.6M702.5 361.5V342.6M702.5 361.5V367.3M710.5 361.5V338.1M710.5 361.5V367.1M719.5 361.5V333.3M719.5 361.5V366.8M737.5 361.5V333M737.5 361.5V367.6M746.5 361.5V337.6M746.5 361.5V367.7M754.5 361.5V341.8M754.5 361.5V368M763.5 361.5V345.7M763.5 361.5V368.4M772.5 361.5V349.3M772.5 361.5V369.1M781.5 361.5V352.5M781.5 361.5V369.7M789.5 361.5V355.3M789.5 361.5V370.4M798.5 361.5V357.9M798.5 361.5V371.2M807.5 361.5V360M807.5 361.5V371.9M816.5 361.5V372.4M824.5 361.5V372.4M833.5 361.5V372.4M842.5 361.5V372.4M851.5 361.5V372.4M860.5 361.5V372.3M868.5 361.5V371.6M877.5 361.5V360.1M877.5 361.5V371M886.5 361.5V357.9M886.5 361.5V370.3M895.5 361.5V355.4M895.5 361.5V369.7M903.5 361.5V352.4M903.5 361.5V369M912.5 361.5V349.2M912.5 361.5V368.3M921.5 361.5V345.6M921.5 361.5V367.9M930.5 361.5V341.6M930.5 361.5V367.5M938.5 361.5V337.2M938.5 361.5V367.1M947.5 361.5V332.6M947.5 361.5V367.2M965.5 361.5V332.6M965.5 361.5V367.2M974.5 361.5V337.2M974.5 361.5V367.1M982.5 361.5V341.6M982.5 361.5V367.5M991.5 361.5V345.6M991.5 361.5V367.9M1000.5 361.5V349.2M1000.5 361.5V368.3M1009.5 361.5V352.4M1009.5 361.5V369M1017.5 361.5V355.4M1017.5 361.5V369.7M1026.5 361.5V357.9M1026.5 361.5V370.3M1035.5 361.5V360.1M1035.5 361.5V371M1044.5 361.5V371.6M1052.5 361.5V372.3M1061.5 361.5V372.4M1070.5 361.5V372.4M1079.5 361.5V372.4M1088.5 361.5V372.4M1096.5 361.5V372.4M1105.5 361.5V360M1105.5 361.5V371.9M1114.5 361.5V357.9M1114.5 361.5V371.2M1123.5 361.5V355.3M1123.5 361.5V370.4M1131.5 361.5V352.5M1131.5 361.5V369.7M1140.5 361.5V349.3M1140.5 361.5V369.1M1149.5 361.5V345.7M1149.5 361.5V368.4M1158.5 361.5V341.8M1158.5 361.5V368M1166.5 361.5V337.6M1166.5 361.5V367.7M1175.5 361.5V333M1175.5 361.5V367.6M1193.5 361.5V333.3M1193.5 361.5V366.8M1202.5 361.5V338.1M1202.5 361.5V367.1M1210.5 361.5V342.6M1210.5 361.5V367.3M1219.5 361.5V346.7M1219.5 361.5V367.6M1228.5 361.5V350.4M1228.5 361.5V368.2M1237.5 361.5V353.6M1237.5 361.5V368.8M1245.5 361.5V356.5M1245.5 361.5V369.5M1254.5 361.5V359M1254.5 361.5V370.2M1263.5 361.5V370.8M1272.5 361.5V371.5M1280.5 361.5V372M1289.5 361.5V372.4M1298.5 361.5V372.9M1307.5 361.5V373.1M1316.5 361.5V373.1M1324.5 361.5V373.1M1333.5 361.5V359.7M1333.5 361.5V373.1M1342.5 361.5V357.5M1342.5 361.5V372.5M1351.5 361.5V354.9M1351.5 361.5V371.5M1359.5 361.5V352M1359.5 361.5V370.6M1368.5 361.5V348.8M1368.5 361.5V370M1377.5 361.5V345.3M1377.5 361.5V369.5M1386.5 361.5V341.3M1386.5 361.5V369.1M1394.5 361.5V337.1M1394.5 361.5V368.5M1403.5 361.5V332.5M1403.5 361.5V367.6M509.5 254.5V239.7M518.5 254.5V242.2M526.5 254.5V244.7M526.5 254.5V255.6M535.5 254.5V247.2M535.5 254.5V257.8M544.5 254.5V249.7M544.5 254.5V258.6M553.5 254.5V252.1M553.5 254.5V259.4M561.5 254.5V260.4M570.5 254.5V261.4M579.5 254.5V261.8M588.5 254.5V262.2M596.5 254.5V262.5M605.5 254.5V262.5M614.5 254.5V262.5M623.5 254.5V262.2M632.5 254.5V261.8M640.5 254.5V261.3M649.5 254.5V260.5M658.5 254.5V259.5M667.5 254.5V258.5M675.5 254.5V251.7M675.5 254.5V257.5M684.5 254.5V248.9M684.5 254.5V256.6M693.5 254.5V246M702.5 254.5V243.1M710.5 254.5V240.2M719.5 254.5V237.2M737.5 254.5V237M746.5 254.5V239.6M754.5 254.5V242.2M763.5 254.5V244.7M772.5 254.5V247.3M772.5 254.5V256M781.5 254.5V249.8M781.5 254.5V257M789.5 254.5V252.2M789.5 254.5V258M798.5 254.5V259.4M807.5 254.5V260.4M816.5 254.5V260.9M824.5 254.5V261.4M833.5 254.5V261.4M842.5 254.5V261.4M851.5 254.5V261.4M860.5 254.5V260.8M868.5 254.5V260.3M877.5 254.5V259.6M886.5 254.5V258.9M895.5 254.5V252.2M895.5 254.5V258.2M903.5 254.5V249.7M903.5 254.5V257.5M912.5 254.5V247.2M912.5 254.5V256.4M921.5 254.5V244.6M930.5 254.5V242M938.5 254.5V239.4M947.5 254.5V236.7M965.5 254.5V236.7M974.5 254.5V239.4M982.5 254.5V242M991.5 254.5V244.6M1000.5 254.5V247.2M1000.5 254.5V256.4M1009.5 254.5V249.7M1009.5 254.5V257.5M1017.5 254.5V252.2M1017.5 254.5V258.2M1026.5 254.5V258.9M1035.5 254.5V259.6M1044.5 254.5V260.3M1052.5 254.5V260.8M1061.5 254.5V261.4M1070.5 254.5V261.4M1079.5 254.5V261.4M1088.5 254.5V261.4M1096.5 254.5V260.9M1105.5 254.5V260.4M1114.5 254.5V259.4M1123.5 254.5V252.2M1123.5 254.5V258M1131.5 254.5V249.8M1131.5 254.5V257M1140.5 254.5V247.3M1140.5 254.5V256M1149.5 254.5V244.7M1158.5 254.5V242.2M1166.5 254.5V239.6M1175.5 254.5V237M1193.5 254.5V237.2M1202.5 254.5V240.2M1210.5 254.5V243.1M1219.5 254.5V246M1228.5 254.5V248.9M1228.5 254.5V256.6M1237.5 254.5V251.7M1237.5 254.5V257.5M1245.5 254.5V258.5M1254.5 254.5V259.5M1263.5 254.5V260.5M1272.5 254.5V261.3M1280.5 254.5V261.8M1289.5 254.5V262.2M1298.5 254.5V262.5M1307.5 254.5V262.5M1316.5 254.5V262.5M1324.5 254.5V262.2M1333.5 254.5V261.8M1342.5 254.5V261.4M1351.5 254.5V260.4M1359.5 254.5V252.1M1359.5 254.5V259.4M1368.5 254.5V249.7M1368.5 254.5V258.6M1377.5 254.5V247.2M1377.5 254.5V257.8M1386.5 254.5V244.7M1386.5 254.5V255.6M1394.5 254.5V242.2M1403.5 254.5V239.7" stroke="#560000" stroke-width="1" fill="none"/>
<g fill="#7e9be2" stroke="#14223e" stroke-width="1">
<polygon points="500.5,688.5 482.5,688.5 500.5,734.4"/>
<polygon points="500.5,688.5 511.9,688.5 500.5,734"/>
<polygon points="500.5,802.5 484.8,802.5 500.5,744"/>
<polygon points="500.5,802.5 519.8,802.5 500.5,744.5"/>
<polygon points="500.5,574.5 481.8,574.5 500.5,633.4"/>
<polygon points="500.5,574.5 509.8,574.5 500.5,627.5"/>
<polygon points="500.5,688.5 493.2,688.5 500.5,632.4"/>
<polygon points="500.5,688.5 519.2,688.5 500.5,637.6"/>
<polygon points="500.5,467.5 483.9,467.5 500.5,522.2"/>
<polygon points="500.5,467.5 507.5,467.5 500.5,509.7"/>
<polygon points="500.5,574.5 495.5,574.5 500.5,535.9"/>
<polygon points="500.5,574.5 516.1,574.5 500.5,525.2"/>
<polygon points="500.5,361.5 485.9,361.5 500.5,414.5"/>
<polygon points="500.5,361.5 505,361.5 500.5,399.2"/>
<polygon points="500.5,467.5 499,467.5 500.5,441"/>
<polygon points="500.5,467.5 513.5,467.5 500.5,418.2"/>
<polygon points="500.5,254.5 487.7,254.5 500.5,309.2"/>
<polygon points="500.5,361.5 510.5,361.5 500.5,314.9"/>
<polygon points="728.5,688.5 708.8,688.5 728.5,742.9"/>
<polygon points="728.5,688.5 748.9,688.5 728.5,742.8"/>
<polygon points="728.5,802.5 708.8,802.5 728.5,748.1"/>
<polygon points="728.5,802.5 748.9,802.5 728.5,748.2"/>
<polygon points="728.5,574.5 708.8,574.5 728.5,628.9"/>
<polygon points="728.5,574.5 749.3,574.5 728.5,628.8"/>
<polygon points="728.5,688.5 708.8,688.5 728.5,632.9"/>
<polygon points="728.5,688.5 749.3,688.5 728.5,633.1"/>
<polygon points="728.5,467.5 712.1,467.5 728.5,522.3"/>
<polygon points="728.5,467.5 745.5,467.5 728.5,522.2"/>
<polygon points="728.5,574.5 715.2,574.5 728.5,527.1"/>
<polygon points="728.5,574.5 744.2,574.5 728.5,527.5"/>
<polygon points="728.5,361.5 716.4,361.5 728.5,415.1"/>
<polygon points="728.5,361.5 740.5,361.5 728.5,415.1"/>
<polygon points="728.5,467.5 718.2,467.5 728.5,416.3"/>
<polygon points="728.5,467.5 739.9,467.5 728.5,416.7"/>
<polygon points="728.5,254.5 720.8,254.5 728.5,302.8"/>
<polygon points="728.5,254.5 736.2,254.5 728.5,302.8"/>
<polygon points="728.5,361.5 722.3,361.5 728.5,313.3"/>
<polygon points="728.5,361.5 734.7,361.5 728.5,313.3"/>
<polygon points="956.5,688.5 936.8,688.5 956.5,742.9"/>
<polygon points="956.5,688.5 976.9,688.5 956.5,742.8"/>
<polygon points="956.5,802.5 936.8,802.5 956.5,748.1"/>
<polygon points="956.5,802.5 976.9,802.5 956.5,748.2"/>
<polygon points="956.5,574.5 936.8,574.5 956.5,628.9"/>
<polygon points="956.5,574.5 977.3,574.5 956.5,628.8"/>
<polygon points="956.5,688.5 936.8,688.5 956.5,632.9"/>
<polygon points="956.5,688.5 977.3,688.5 956.5,633.1"/>
<polygon points="956.5,467.5 940.1,467.5 956.5,522.3"/>
<polygon points="956.5,467.5 973.5,467.5 956.5,522.2"/>
<polygon points="956.5,574.5 943.2,574.5 956.5,527.1"/>
<polygon points="956.5,574.5 972.2,574.5 956.5,527.5"/>
<polygon points="956.5,361.5 944.4,361.5 956.5,415.1"/>
<polygon points="956.5,361.5 968.5,361.5 956.5,415.1"/>
<polygon points="956.5,467.5 946.2,467.5 956.5,416.3"/>
<polygon points="956.5,467.5 967.9,467.5 956.5,416.7"/>
<polygon points="956.5,254.5 948.8,254.5 956.5,302.8"/>
<polygon points="956.5,254.5 964.2,254.5 956.5,302.8"/>
<polygon points="956.5,361.5 950.3,361.5 956.5,313.3"/>
<polygon points="956.5,361.5 962.7,361.5 956.5,313.3"/>
<polygon points="1184.5,688.5 1164.1,688.5 1184.5,742.8"/>
<polygon points="1184.5,688.5 1204.2,688.5 1184.5,742.9"/>
<polygon points="1184.5,802.5 1164.1,802.5 1184.5,748.2"/>
<polygon points="1184.5,802.5 1204.2,802.5 1184.5,748.1"/>
<polygon points="1184.5,574.5 1163.7,574.5 1184.5,628.8"/>
<polygon points="1184.5,574.5 1204.2,574.5 1184.5,628.9"/>
<polygon points="1184.5,688.5 1163.7,688.5 1184.5,633.1"/>
<polygon points="1184.5,688.5 1204.2,688.5 1184.5,632.9"/>
<polygon points="1184.5,467.5 1167.5,467.5 1184.5,522.2"/>
<polygon points="1184.5,467.5 1200.9,467.5 1184.5,522.3"/>
<polygon points="1184.5,574.5 1168.8,574.5 1184.5,527.5"/>
<polygon points="1184.5,574.5 1197.8,574.5 1184.5,527.1"/>
<polygon points="1184.5,361.5 1172.5,361.5 1184.5,415.1"/>
<polygon points="1184.5,361.5 1196.6,361.5 1184.5,415.1"/>
<polygon points="1184.5,467.5 1173.1,467.5 1184.5,416.7"/>
<polygon points="1184.5,467.5 1194.8,467.5 1184.5,416.3"/>
<polygon points="1184.5,254.5 1176.8,254.5 1184.5,302.8"/>
<polygon points="1184.5,254.5 1192.2,254.5 1184.5,302.8"/>
<polygon points="1184.5,361.5 1178.3,361.5 1184.5,313.3"/>
<polygon points="1184.5,361.5 1190.7,361.5 1184.5,313.3"/>
<polygon points="1412.5,688.5 1401.1,688.5 1412.5,734"/>
<polygon points="1412.5,688.5 1430.5,688.5 1412.5,734.4"/>
<polygon points="1412.5,802.5 1393.2,802.5 1412.5,744.5"/>
<polygon points="1412.5,802.5 1428.2,802.5 1412.5,744"/>
<polygon points="1412.5,574.5 1403.2,574.5 1412.5,627.5"/>
<polygon points="1412.5,574.5 1431.2,574.5 1412.5,633.4"/>
<polygon points="1412.5,688.5 1393.8,688.5 1412.5,637.6"/>
<polygon points="1412.5,688.5 1419.8,688.5 1412.5,632.4"/>
<polygon points="1412.5,467.5 1405.5,467.5 1412.5,509.7"/>
<polygon points="1412.5,467.5 1429.1,467.5 1412.5,522.2"/>
<polygon points="1412.5,574.5 1396.9,574.5 1412.5,525.2"/>
<polygon points="1412.5,574.5 1417.5,574.5 1412.5,535.9"/>
<polygon points="1412.5,361.5 1408,361.5 1412.5,399.2"/>
<polygon points="1412.5,361.5 1427.1,361.5 1412.5,414.5"/>
<polygon points="1412.5,467.5 1399.5,467.5 1412.5,418.2"/>
<polygon points="1412.5,467.5 1414,467.5 1412.5,441"/>
<polygon points="1412.5,254.5 1425.3,254.5 1412.5,309.2"/>
<polygon points="1412.5,361.5 1402.5,361.5 1412.5,314.9"/>
</g>
<path d="M500.5 702.5H488M500.5 717.5H493.9M500.5 731.5H499.4M500.5 702.5H508.4M500.5 717.5H504.6M500.5 731.5H501.1M500.5 788.5H488.6M500.5 774.5H492.3M500.5 759.5H496.3M500.5 745.5H500.1M500.5 788.5H515.1M500.5 774.5H510.5M500.5 759.5H505.5M500.5 588.5H486.2M500.5 603.5H491M500.5 617.5H495.5M500.5 631.5H499.9M500.5 588.5H507.3M500.5 603.5H504.7M500.5 617.5H502.3M500.5 674.5H495M500.5 660.5H496.8M500.5 645.5H498.8M500.5 674.5H514.1M500.5 660.5H508.9M500.5 645.5H503.4M500.5 480.5H487.8M500.5 494.5H492.1M500.5 507.5H496M500.5 480.5H505.3M500.5 494.5H503M500.5 507.5H500.9M500.5 561.5H497.2M500.5 547.5H499M500.5 561.5H512M500.5 547.5H507.6M500.5 534.5H503.4M500.5 374.5H489.5M500.5 388.5H493.3M500.5 401.5H496.9M500.5 374.5H503.4M500.5 388.5H501.8M500.5 454.5H499.7M500.5 454.5H510.1M500.5 441.5H506.6M500.5 427.5H503M500.5 267.5H490.7M500.5 281.5H494M500.5 294.5H497.1M500.5 348.5H507.7M500.5 334.5H504.7M500.5 321.5H501.9M728.5 702.5H713.9M728.5 717.5H719.3M728.5 731.5H724.4M728.5 702.5H743.6M728.5 717.5H738M728.5 731.5H732.7M728.5 788.5H713.9M728.5 774.5H718.9M728.5 759.5H724.4M728.5 788.5H743.6M728.5 774.5H738.4M728.5 759.5H732.7M728.5 588.5H713.9M728.5 603.5H719.3M728.5 617.5H724.4M728.5 588.5H743.9M728.5 603.5H738.2M728.5 617.5H732.8M728.5 674.5H713.8M728.5 660.5H718.7M728.5 645.5H724M728.5 674.5H744M728.5 660.5H738.8M728.5 645.5H733.2M728.5 480.5H716M728.5 494.5H720.2M728.5 507.5H724.1M728.5 480.5H741.5M728.5 494.5H737.1M728.5 507.5H733.1M728.5 561.5H718.8M728.5 547.5H722.8M728.5 534.5H726.4M728.5 561.5H739.9M728.5 547.5H735.2M728.5 534.5H730.8M728.5 374.5H719.3M728.5 388.5H722.5M728.5 401.5H725.4M728.5 374.5H737.6M728.5 388.5H734.5M728.5 401.5H731.5M728.5 454.5H720.8M728.5 441.5H723.4M728.5 427.5H726.3M728.5 454.5H737M728.5 441.5H734.1M728.5 427.5H730.9M728.5 267.5H722.9M728.5 281.5H725.1M728.5 294.5H727.2M728.5 267.5H734.1M728.5 281.5H731.9M728.5 294.5H729.8M728.5 348.5H724M728.5 334.5H725.8M728.5 321.5H727.4M728.5 348.5H733M728.5 334.5H731.2M728.5 321.5H729.6M956.5 702.5H941.9M956.5 717.5H947.3M956.5 731.5H952.4M956.5 702.5H971.6M956.5 717.5H966M956.5 731.5H960.7M956.5 788.5H941.9M956.5 774.5H946.9M956.5 759.5H952.4M956.5 788.5H971.6M956.5 774.5H966.4M956.5 759.5H960.7M956.5 588.5H941.9M956.5 603.5H947.3M956.5 617.5H952.4M956.5 588.5H971.9M956.5 603.5H966.2M956.5 617.5H960.8M956.5 674.5H941.8M956.5 660.5H946.7M956.5 645.5H952M956.5 674.5H972M956.5 660.5H966.8M956.5 645.5H961.2M956.5 480.5H944M956.5 494.5H948.2M956.5 507.5H952.1M956.5 480.5H969.5M956.5 494.5H965.1M956.5 507.5H961.1M956.5 561.5H946.8M956.5 547.5H950.8M956.5 534.5H954.4M956.5 561.5H967.9M956.5 547.5H963.2M956.5 534.5H958.8M956.5 374.5H947.3M956.5 388.5H950.5M956.5 401.5H953.4M956.5 374.5H965.6M956.5 388.5H962.5M956.5 401.5H959.5M956.5 454.5H948.8M956.5 441.5H951.4M956.5 427.5H954.3M956.5 454.5H965M956.5 441.5H962.1M956.5 427.5H958.9M956.5 267.5H950.9M956.5 281.5H953.1M956.5 294.5H955.2M956.5 267.5H962.1M956.5 281.5H959.9M956.5 294.5H957.8M956.5 348.5H952M956.5 334.5H953.8M956.5 321.5H955.4M956.5 348.5H961M956.5 334.5H959.2M956.5 321.5H957.6M1184.5 702.5H1169.4M1184.5 717.5H1175M1184.5 731.5H1180.3M1184.5 702.5H1199.1M1184.5 717.5H1193.7M1184.5 731.5H1188.6M1184.5 788.5H1169.4M1184.5 774.5H1174.6M1184.5 759.5H1180.3M1184.5 788.5H1199.1M1184.5 774.5H1194.1M1184.5 759.5H1188.6M1184.5 588.5H1169.1M1184.5 603.5H1174.8M1184.5 617.5H1180.2M1184.5 588.5H1199.1M1184.5 603.5H1193.7M1184.5 617.5H1188.6M1184.5 674.5H1169M1184.5 660.5H1174.2M1184.5 645.5H1179.8M1184.5 674.5H1199.2M1184.5 660.5H1194.3M1184.5 645.5H1189M1184.5 480.5H1171.5M1184.5 494.5H1175.9M1184.5 507.5H1179.9M1184.5 480.5H1197M1184.5 494.5H1192.8M1184.5 507.5H1188.9M1184.5 561.5H1173.1M1184.5 547.5H1177.8M1184.5 534.5H1182.2M1184.5 561.5H1194.2M1184.5 547.5H1190.2M1184.5 534.5H1186.6M1184.5 374.5H1175.4M1184.5 388.5H1178.5M1184.5 401.5H1181.5M1184.5 374.5H1193.7M1184.5 388.5H1190.5M1184.5 401.5H1187.6M1184.5 454.5H1176M1184.5 441.5H1178.9M1184.5 427.5H1182.1M1184.5 454.5H1192.2M1184.5 441.5H1189.6M1184.5 427.5H1186.7M1184.5 267.5H1178.9M1184.5 281.5H1181.1M1184.5 294.5H1183.2M1184.5 267.5H1190.1M1184.5 281.5H1187.9M1184.5 294.5H1185.8M1184.5 348.5H1180M1184.5 334.5H1181.8M1184.5 321.5H1183.4M1184.5 348.5H1189M1184.5 334.5H1187.2M1184.5 321.5H1185.6M1412.5 702.5H1404.6M1412.5 717.5H1408.4M1412.5 731.5H1411.9M1412.5 702.5H1425M1412.5 717.5H1419.1M1412.5 731.5H1413.6M1412.5 788.5H1397.9M1412.5 774.5H1402.5M1412.5 759.5H1407.5M1412.5 788.5H1424.4M1412.5 774.5H1420.7M1412.5 759.5H1416.7M1412.5 745.5H1412.9M1412.5 588.5H1405.7M1412.5 603.5H1408.3M1412.5 617.5H1410.7M1412.5 588.5H1426.8M1412.5 603.5H1422M1412.5 617.5H1417.5M1412.5 631.5H1413.1M1412.5 674.5H1398.9M1412.5 660.5H1404.1M1412.5 645.5H1409.6M1412.5 674.5H1418M1412.5 660.5H1416.2M1412.5 645.5H1414.2M1412.5 480.5H1407.7M1412.5 494.5H1410M1412.5 507.5H1412.1M1412.5 480.5H1425.2M1412.5 494.5H1420.9M1412.5 507.5H1417M1412.5 561.5H1401M1412.5 547.5H1405.4M1412.5 534.5H1409.6M1412.5 561.5H1415.8M1412.5 547.5H1414M1412.5 374.5H1409.6M1412.5 388.5H1411.2M1412.5 374.5H1423.5M1412.5 388.5H1419.7M1412.5 401.5H1416.1M1412.5 454.5H1402.9M1412.5 441.5H1406.4M1412.5 427.5H1410M1412.5 454.5H1413.3M1412.5 267.5H1422.3M1412.5 281.5H1419M1412.5 294.5H1415.9M1412.5 348.5H1405.3M1412.5 334.5H1408.3M1412.5 321.5H1411.1" stroke="#14223e" stroke-width="1" fill="none"/>
<rect x="473.5" y="802" width="54" height="18" fill="#fbdf9e" stroke="#111" stroke-width="1"/>
<rect x="701.5" y="802" width="54" height="18" fill="#fbdf9e" stroke="#111" stroke-width="1"/>
<rect x="929.5" y="802" width="54" height="18" fill="#fbdf9e" stroke="#111" stroke-width="1"/>
<rect x="1157.5" y="802" width="54" height="18" fill="#fbdf9e" stroke="#111" stroke-width="1"/>
<rect x="1385.5" y="802" width="54" height="18" fill="#fbdf9e" stroke="#111" stroke-width="1"/>
<path d="M500.5 688.5H1412.5M500.5 574.5H1412.5M500.5 467.5H1412.5M500.5 361.5H1412.5M500.5 254.5H1412.5M500.5 254.5V802.5M728.5 254.5V802.5M956.5 254.5V802.5M1184.5 254.5V802.5M1412.5 254.5V802.5" stroke="#1a1a1a" stroke-width="3" fill="none"/>
<path d="M500.5 688.5H1412.5M500.5 574.5H1412.5M500.5 467.5H1412.5M500.5 361.5H1412.5M500.5 254.5H1412.5M500.5 254.5V802.5M728.5 254.5V802.5M956.5 254.5V802.5M1184.5 254.5V802.5M1412.5 254.5V802.5" stroke="#ffffff" stroke-width="1" fill="none"/>
<circle cx="500.5" cy="802.5" r="7.6" fill="#3d8cc2" stroke="#10263c" stroke-width="1"/>
<circle cx="500.2" cy="802.2" r="1.6" fill="#d6e6f4"/>
<circle cx="500.5" cy="688.5" r="7.6" fill="#3d8cc2" stroke="#10263c" stroke-width="1"/>
<circle cx="500.2" cy="688.2" r="1.6" fill="#d6e6f4"/>
<circle cx="500.5" cy="574.5" r="7.6" fill="#3d8cc2" stroke="#10263c" stroke-width="1"/>
<circle cx="500.2" cy="574.2" r="1.6" fill="#d6e6f4"/>
<circle cx="500.5" cy="467.5" r="7.6" fill="#3d8cc2" stroke="#10263c" stroke-width="1"/>
<circle cx="500.2" cy="467.2" r="1.6" fill="#d6e6f4"/>
<circle cx="500.5" cy="361.5" r="7.6" fill="#3d8cc2" stroke="#10263c" stroke-width="1"/>
<circle cx="500.2" cy="361.2" r="1.6" fill="#d6e6f4"/>
<circle cx="500.5" cy="254.5" r="7.6" fill="#3d8cc2" stroke="#10263c" stroke-width="1"/>
<circle cx="500.2" cy="254.2" r="1.6" fill="#d6e6f4"/>
<circle cx="728.5" cy="802.5" r="7.6" fill="#3d8cc2" stroke="#10263c" stroke-width="1"/>
<circle cx="728.2" cy="802.2" r="1.6" fill="#d6e6f4"/>
<circle cx="728.5" cy="688.5" r="7.6" fill="#3d8cc2" stroke="#10263c" stroke-width="1"/>
<circle cx="728.2" cy="688.2" r="1.6" fill="#d6e6f4"/>
<circle cx="728.5" cy="574.5" r="7.6" fill="#3d8cc2" stroke="#10263c" stroke-width="1"/>
<circle cx="728.2" cy="574.2" r="1.6" fill="#d6e6f4"/>
<circle cx="728.5" cy="467.5" r="7.6" fill="#3d8cc2" stroke="#10263c" stroke-width="1"/>
<circle cx="728.2" cy="467.2" r="1.6" fill="#d6e6f4"/>
<circle cx="728.5" cy="361.5" r="7.6" fill="#3d8cc2" stroke="#10263c" stroke-width="1"/>
<circle cx="728.2" cy="361.2" r="1.6" fill="#d6e6f4"/>
<circle cx="728.5" cy="254.5" r="7.6" fill="#3d8cc2" stroke="#10263c" stroke-width="1"/>
<circle cx="728.2" cy="254.2" r="1.6" fill="#d6e6f4"/>
<circle cx="956.5" cy="802.5" r="7.6" fill="#3d8cc2" stroke="#10263c" stroke-width="1"/>
<circle cx="956.2" cy="802.2" r="1.6" fill="#d6e6f4"/>
<circle cx="956.5" cy="688.5" r="7.6" fill="#3d8cc2" stroke="#10263c" stroke-width="1"/>
<circle cx="956.2" cy="688.2" r="1.6" fill="#d6e6f4"/>
<circle cx="956.5" cy="574.5" r="7.6" fill="#3d8cc2" stroke="#10263c" stroke-width="1"/>
<circle cx="956.2" cy="574.2" r="1.6" fill="#d6e6f4"/>
<circle cx="956.5" cy="467.5" r="7.6" fill="#3d8cc2" stroke="#10263c" stroke-width="1"/>
<circle cx="956.2" cy="467.2" r="1.6" fill="#d6e6f4"/>
<circle cx="956.5" cy="361.5" r="7.6" fill="#3d8cc2" stroke="#10263c" stroke-width="1"/>
<circle cx="956.2" cy="361.2" r="1.6" fill="#d6e6f4"/>
<circle cx="956.5" cy="254.5" r="7.6" fill="#3d8cc2" stroke="#10263c" stroke-width="1"/>
<circle cx="956.2" cy="254.2" r="1.6" fill="#d6e6f4"/>
<circle cx="1184.5" cy="802.5" r="7.6" fill="#3d8cc2" stroke="#10263c" stroke-width="1"/>
<circle cx="1184.2" cy="802.2" r="1.6" fill="#d6e6f4"/>
<circle cx="1184.5" cy="688.5" r="7.6" fill="#3d8cc2" stroke="#10263c" stroke-width="1"/>
<circle cx="1184.2" cy="688.2" r="1.6" fill="#d6e6f4"/>
<circle cx="1184.5" cy="574.5" r="7.6" fill="#3d8cc2" stroke="#10263c" stroke-width="1"/>
<circle cx="1184.2" cy="574.2" r="1.6" fill="#d6e6f4"/>
<circle cx="1184.5" cy="467.5" r="7.6" fill="#3d8cc2" stroke="#10263c" stroke-width="1"/>
<circle cx="1184.2" cy="467.2" r="1.6" fill="#d6e6f4"/>
<circle cx="1184.5" cy="361.5" r="7.6" fill="#3d8cc2" stroke="#10263c" stroke-width="1"/>
<circle cx="1184.2" cy="361.2" r="1.6" fill="#d6e6f4"/>
<circle cx="1184.5" cy="254.5" r="7.6" fill="#3d8cc2" stroke="#10263c" stroke-width="1"/>
<circle cx="1184.2" cy="254.2" r="1.6" fill="#d6e6f4"/>
<circle cx="1412.5" cy="802.5" r="7.6" fill="#3d8cc2" stroke="#10263c" stroke-width="1"/>
<circle cx="1412.2" cy="802.2" r="1.6" fill="#d6e6f4"/>
<circle cx="1412.5" cy="688.5" r="7.6" fill="#3d8cc2" stroke="#10263c" stroke-width="1"/>
<circle cx="1412.2" cy="688.2" r="1.6" fill="#d6e6f4"/>
<circle cx="1412.5" cy="574.5" r="7.6" fill="#3d8cc2" stroke="#10263c" stroke-width="1"/>
<circle cx="1412.2" cy="574.2" r="1.6" fill="#d6e6f4"/>
<circle cx="1412.5" cy="467.5" r="7.6" fill="#3d8cc2" stroke="#10263c" stroke-width="1"/>
<circle cx="1412.2" cy="467.2" r="1.6" fill="#d6e6f4"/>
<circle cx="1412.5" cy="361.5" r="7.6" fill="#3d8cc2" stroke="#10263c" stroke-width="1"/>
<circle cx="1412.2" cy="361.2" r="1.6" fill="#d6e6f4"/>
<circle cx="1412.5" cy="254.5" r="7.6" fill="#3d8cc2" stroke="#10263c" stroke-width="1"/>
<circle cx="1412.2" cy="254.2" r="1.6" fill="#d6e6f4"/>
</g></svg>
<div class="a" style="left:241px;top:75px;width:233px;height:20px;border:1px solid #b06a6a;background:#fff"></div>
<div class="a" style="left:244px;top:79px;font-size:12px;white-space:nowrap;letter-spacing:0.15px">Diagrama de Momentos en el Pórtico</div>
<div class="a" style="left:459px;top:76px;width:16px;height:20px;background:#f2a4a4;border-left:1px solid #c08080"></div>
<svg class="a" style="left:459px;top:76px" width="17" height="20"><path d="M4 8L8.5 12L13 8" fill="none" stroke="#111" stroke-width="2.2"/></svg>
<div class="a" style="left:1390px;top:75px;width:279px;height:20px;border:1px solid #b06a6a;background:#fff"></div>
<div class="a" style="left:1393px;top:79px;font-size:12px;white-space:nowrap;letter-spacing:-0.08px">ENVOLVENTES SOLICITACIONES (Máximos)</div>
<div class="a" style="left:1654px;top:76px;width:16px;height:20px;background:#f2a4a4;border-left:1px solid #c08080"></div>
<svg class="a" style="left:1654px;top:76px" width="17" height="20"><path d="M4 8L8.5 12L13 8" fill="none" stroke="#111" stroke-width="2.2"/></svg>
<div class="a" style="left:4px;top:994px;width:191px;height:25px;border:1px solid #6a8cb8;background:#fff4d8"></div>
<svg class="a" style="left:7px;top:999px" width="34" height="17"><rect x="1.5" y="1.5" width="12" height="12" fill="#fff" stroke="#2a3040" stroke-width="1.2"/><path d="M4 7.5L6.5 10.5L11.5 4" fill="none" stroke="#2a3040" stroke-width="1.3"/><path d="M19 5.5H24V2.5L30 8L24 13.5V10.5H19Z" fill="#f47878" stroke="#c02020" stroke-width="1"/></svg>
<div class="a" style="left:44px;top:1001px;font-size:12px;white-space:nowrap;letter-spacing:0.13px">Escala Local por Pórtico</div>
<div class="a" style="left:564px;top:996px;width:124px;height:41px;border:1px solid #2f5a8a;border-radius:3px;background:#e6ebdc"></div>
<svg class="a" style="left:571px;top:1003px" width="38" height="26"><path d="M1 5V15.5H13Z M34.6 2.75V15.5H24Z" fill="#f6a6a6" stroke="#7a1010" stroke-width="0.9"/><path d="M5 17.6Q18.5 25 32 17.6Z" fill="#f6a6a6" stroke="#7a1010" stroke-width="0.9"/><rect x="1" y="15.5" width="33.6" height="2.3" fill="#fff" stroke="#111" stroke-width="1"/><line x1="20.5" y1="10" x2="26" y2="15.5" stroke="#d08a20" stroke-width="2.6"/><circle cx="17" cy="6.5" r="5.6" fill="#e8f4ff" stroke="#7aa6d8" stroke-width="1.1"/><path d="M14 6.5H20M17 3.5V9.5" stroke="#a01010" stroke-width="1.8"/></svg>
<div class="a" style="left:610px;top:1011px;font-size:12px;white-space:nowrap;letter-spacing:0.3px">Aumenta</div>
<div class="a" style="left:692px;top:996px;width:124px;height:41px;border:1px solid #2f5a8a;border-radius:3px;background:#f9dede"></div>
<svg class="a" style="left:699px;top:1003px" width="38" height="26"><path d="M1 5V15.5H13Z M34.6 2.75V15.5H24Z" fill="#f6a6a6" stroke="#7a1010" stroke-width="0.9"/><path d="M5 17.6Q18.5 25 32 17.6Z" fill="#f6a6a6" stroke="#7a1010" stroke-width="0.9"/><rect x="1" y="15.5" width="33.6" height="2.3" fill="#fff" stroke="#111" stroke-width="1"/><line x1="20.5" y1="10" x2="26" y2="15.5" stroke="#d08a20" stroke-width="2.6"/><circle cx="17" cy="6.5" r="5.6" fill="#e8f4ff" stroke="#7aa6d8" stroke-width="1.1"/><path d="M14 6.5H20" stroke="#a01010" stroke-width="1.8"/></svg>
<div class="a" style="left:738px;top:1011px;font-size:12px;white-space:nowrap;letter-spacing:0.3px">Disminuye</div>
<div class="a" style="left:820px;top:996px;width:130px;height:41px;border:1px solid #2f5a8a;border-radius:3px;background:#e2e2f0"></div>
<svg class="a" style="left:827px;top:1003px" width="38" height="26"><path d="M1 5V15.5H13Z M34.6 2.75V15.5H24Z" fill="#f6a6a6" stroke="#7a1010" stroke-width="0.9"/><path d="M5 17.6Q18.5 25 32 17.6Z" fill="#f6a6a6" stroke="#7a1010" stroke-width="0.9"/><rect x="1" y="15.5" width="33.6" height="2.3" fill="#fff" stroke="#111" stroke-width="1"/><line x1="20.5" y1="10" x2="26" y2="15.5" stroke="#d08a20" stroke-width="2.6"/><circle cx="17" cy="6.5" r="5.6" fill="#e8f4ff" stroke="#7aa6d8" stroke-width="1.1"/><path d="M13 6.5H21M17 2.5V10.5" stroke="#801010" stroke-width="1.1"/><path d="M12.5 6.5L14.5 5V8Z M21.5 6.5L19.5 5V8Z M17 2L15.5 4H18.5Z M17 11L15.5 9H18.5Z" fill="#801010"/></svg>
<div class="a" style="left:866px;top:1011px;font-size:12px;white-space:nowrap;letter-spacing:0.3px">Reestablece</div>
<div class="a" style="left:954px;top:996px;width:110px;height:41px;border:1px solid #2f5a8a;border-radius:3px;background:#f6e4d8"></div>
<svg class="a" style="left:962px;top:1000px" width="34" height="34"><rect x="16" y="1" width="15" height="15" fill="#3a70c0" stroke="#1a3a80"/><text x="23.5" y="13" text-anchor="middle" font-size="11" font-weight="bold" font-style="italic" fill="#fff">W</text><rect x="16" y="17" width="15" height="15" fill="#3a9a50" stroke="#1a5a20"/><text x="23.5" y="29" text-anchor="middle" font-size="11" font-weight="bold" fill="#fff">X</text><circle cx="8" cy="8.5" r="6.5" fill="#5aa0e8" stroke="#1a5ab0"/><text x="8" y="12.5" text-anchor="middle" font-size="11" font-weight="bold" font-style="italic" fill="#fff">e</text><rect x="1.5" y="17" width="13" height="15" fill="#fff" stroke="#888"/><path d="M1 18H10V22H1Z" fill="#e82020"/><path d="M4 30L8 22L12 30" fill="none" stroke="#e82020" stroke-width="1.3"/></svg>
<div class="a" style="left:998px;top:1011px;font-size:12px;white-space:nowrap">Gráficos</div>
<div class="a" style="left:1068px;top:996px;width:44px;height:41px;border:1px solid #2f5a8a;border-radius:3px;background:#f6f6fa"></div>
<svg class="a" style="left:1075px;top:1002px" width="32" height="30"><path d="M18 5L29 2V27L18 29Z" fill="#8a4a18" stroke="#2a1a08"/><path d="M14 6H18V28H14Z" fill="#d0d4dc" stroke="#555"/><circle cx="25" cy="16" r="1" fill="#fff"/><path d="M2 12H10V7L18 15L10 23V18H2Z" fill="#a8c0e0" stroke="#2a5aa0" stroke-width="1"/></svg>
</body></html>
